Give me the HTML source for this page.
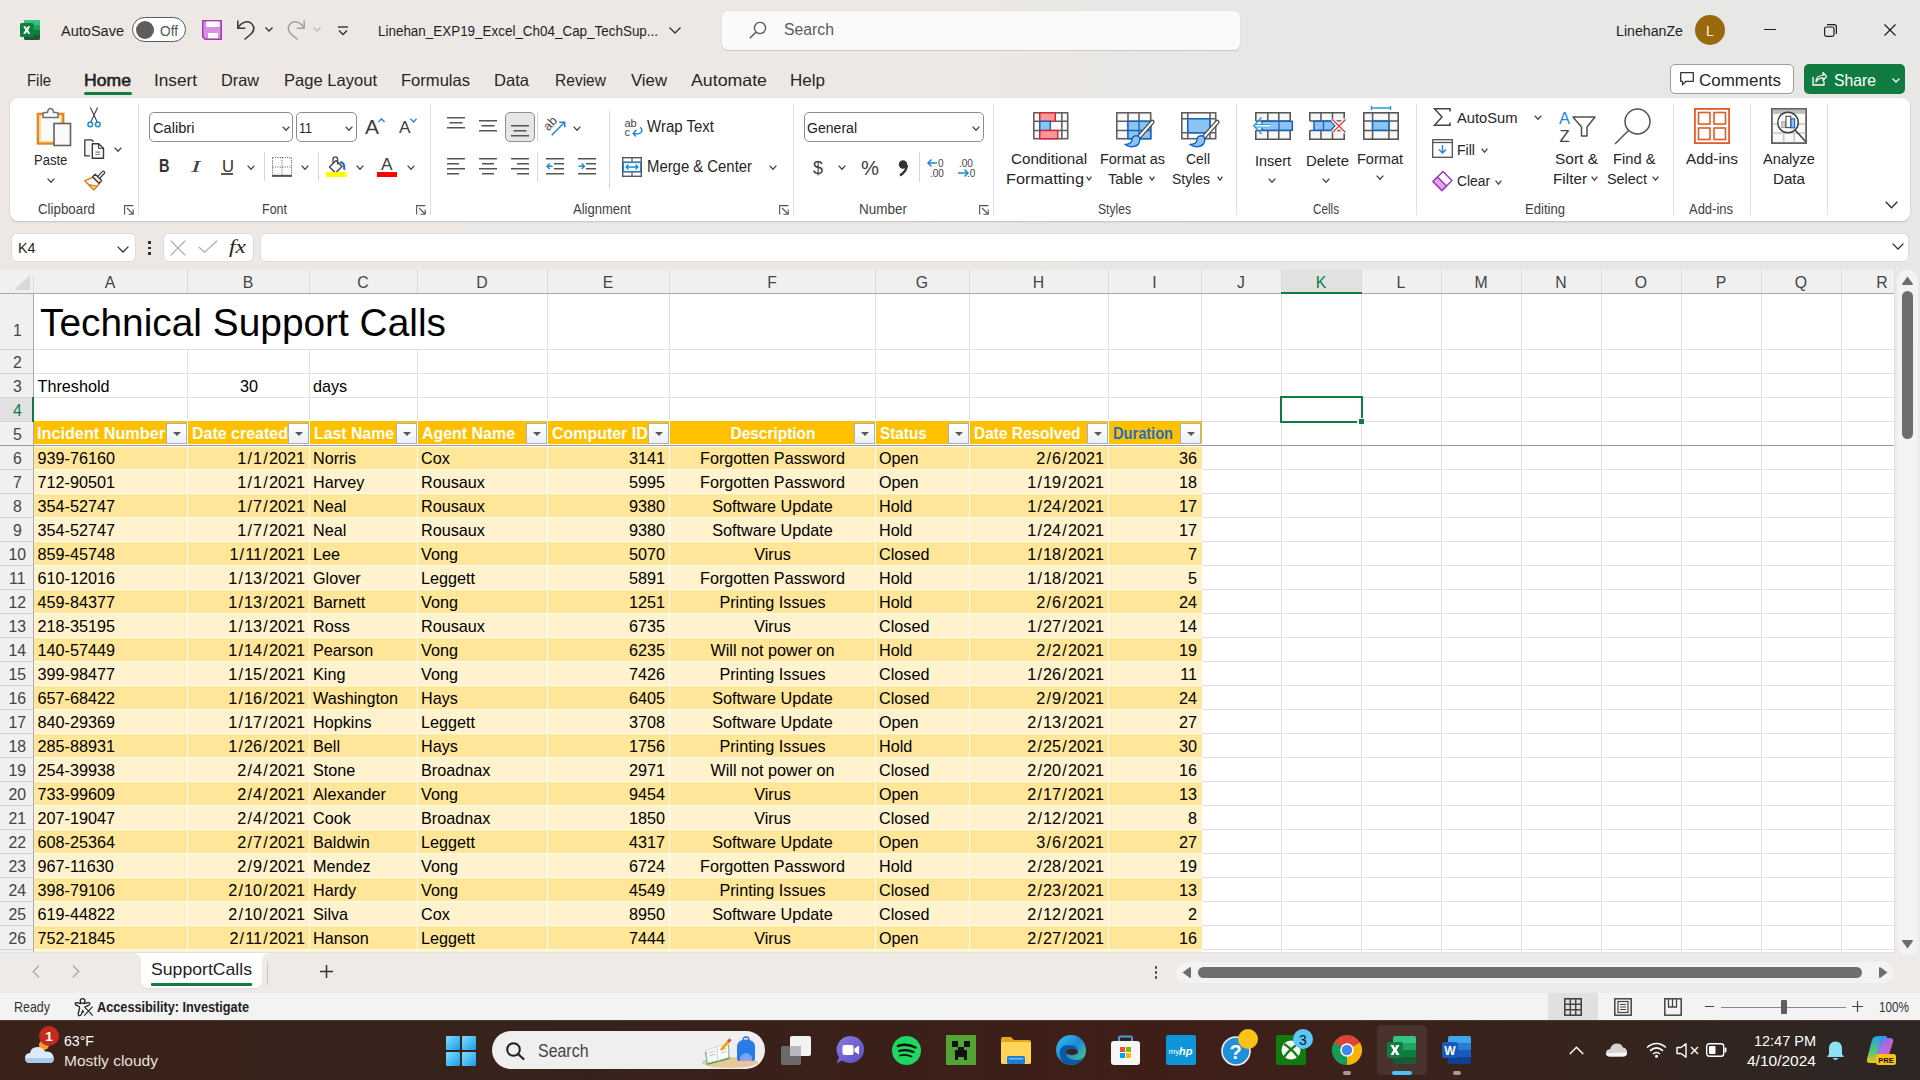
<!DOCTYPE html><html><head><meta charset="utf-8"><style>
html,body{margin:0;padding:0}
body{width:1920px;height:1080px;overflow:hidden;position:relative;font-family:'Liberation Sans', sans-serif;background:#ECE9E6}
.a{position:absolute}
.t{position:absolute;white-space:pre;line-height:1}

</style></head><body>
<div class="a" style="left:0px;top:0px;width:1920px;height:270px;background:linear-gradient(90deg,#EDE8E4 0%,#ECE8E5 45%,#E8E7E5 65%,#E7E7E6 100%)"></div>
<svg class="a" style="left:20px;top:20px;overflow:visible" width="20" height="20" viewBox="0 0 20 20"><rect x="4" y="0" width="16" height="20" rx="1.5" fill="#185C37"/>
<path d="M5.5 0 H18.5 Q20 0 20 1.5 V5 H4 V1.5 Q4 0 5.5 0 Z" fill="#33C481"/>
<rect x="4" y="5" width="16" height="5" fill="#21A366"/><rect x="4" y="10" width="16" height="5" fill="#107C41"/>
<rect x="0" y="3" width="13.5" height="14" rx="1.5" fill="#107C41"/>
<path d="M3.2 6.3 L5.6 6.3 L6.75 8.6 L7.9 6.3 L10.3 6.3 L8.1 10 L10.3 13.7 L7.9 13.7 L6.75 11.4 L5.6 13.7 L3.2 13.7 L5.4 10 Z" fill="#fff"/></svg>
<div class="t" style="left:61px;transform-origin:0 0;top:22.88px;font-size:15.5px;color:#1F1F1F;font-weight:normal;transform:scaleX(0.9373);">AutoSave</div>
<div class="a" style="left:132px;top:17px;width:54px;height:25px;box-sizing:border-box;border:1px solid #5C5C5C;border-radius:13px;background:#FFFFFF"></div>
<div class="a" style="left:136px;top:20.5px;width:18px;height:18px;border-radius:50%;background:#5E5E5E"></div>
<div class="t" style="left:160px;transform-origin:0 0;top:22.80px;font-size:15px;color:#555555;font-weight:normal;transform:scaleX(0.9122);">Off</div>
<svg class="a" style="left:202px;top:20px;overflow:visible" width="20" height="20" viewBox="0 0 20 20"><path d="M0.75 0.75 H19.25 V19.25 H3 L0.75 17 Z" fill="#D68FE2" stroke="#A33CB8" stroke-width="1.5"/>
<rect x="4.3" y="1.5" width="13.2" height="5.5" fill="#FFFFFF"/><rect x="6" y="13" width="10" height="5.2" fill="#FFFFFF"/></svg>
<svg class="a" style="left:237px;top:20px;overflow:visible" width="20" height="20" viewBox="0 0 20 20"><path d="M0.8 0.5 V8.3 H8.3" stroke="#3A3A3A" stroke-width="1.5" fill="none"/><path d="M1 8 C4 2 11 0 14.5 3.5 C18 7 17 11 14 14 L7.5 19.5" stroke="#3A3A3A" stroke-width="1.5" fill="none"/></svg>
<svg class="a" style="left:265px;top:27px;overflow:visible" width="8" height="5" viewBox="0 0 8 5"><path d="M0.5 0.5 L4 4 L7.5 0.5" stroke="#333" stroke-width="1.3" fill="none"/></svg>
<svg class="a" style="left:286px;top:20px;overflow:visible" width="19" height="20" viewBox="0 0 19 20"><path d="M18.2 0.5 V8.3 H10.7" stroke="#A0A0A0" stroke-width="1.5" fill="none"/><path d="M18 8 C15 2 8 0 4.5 3.5 C1 7 2 11 5 14 L11.5 19.5" stroke="#A0A0A0" stroke-width="1.5" fill="none"/></svg>
<svg class="a" style="left:313px;top:27px;overflow:visible" width="8" height="5" viewBox="0 0 8 5"><path d="M0.5 0.5 L4 4 L7.5 0.5" stroke="#BDBDBD" stroke-width="1.3" fill="none"/></svg>
<svg class="a" style="left:338px;top:26px;overflow:visible" width="10" height="10" viewBox="0 0 10 10"><path d="M0 1 H10" stroke="#333" stroke-width="1.4"/><path d="M1 4.5 L5 8.5 L9 4.5" stroke="#333" stroke-width="1.4" fill="none"/></svg>
<div class="t" style="left:378px;transform-origin:0 0;top:22.88px;font-size:15.5px;color:#1F1F1F;font-weight:normal;transform:scaleX(0.8665);">Linehan_EXP19_Excel_Ch04_Cap_TechSup...</div>
<svg class="a" style="left:669px;top:27px;overflow:visible" width="12" height="7" viewBox="0 0 12 7"><path d="M0.5 0.5 L6 6 L11.5 0.5" stroke="#333" stroke-width="1.3" fill="none"/></svg>
<div class="a" style="left:722px;top:11px;width:518px;height:39px;box-sizing:border-box;background:#FAFAFA;border-radius:6px;box-shadow:0 1px 0 #C9C9C9, 0 0 0 1px #E2E2E2"></div>
<svg class="a" style="left:749px;top:21px;overflow:visible" width="18" height="18" viewBox="0 0 18 18"><circle cx="11" cy="7" r="5.6" stroke="#555" stroke-width="1.3" fill="none"/><path d="M7 11 L0.8 17.2" stroke="#555" stroke-width="1.4"/></svg>
<div class="t" style="left:784px;transform-origin:0 0;top:21.76px;font-size:16px;color:#5C5C5C;font-weight:normal;transform:scaleX(0.9862);">Search</div>
<div class="t" style="left:1616px;transform-origin:0 0;top:22.88px;font-size:15.5px;color:#1F1F1F;font-weight:normal;transform:scaleX(0.9146);">LinehanZe</div>
<div class="a" style="left:1695px;top:15px;width:30px;height:30px;border-radius:50%;background:#98690E"></div>
<div class="t" style="left:1310.0px;width:800px;text-align:center;top:24.15px;font-size:14px;color:#FFF3D6;font-weight:normal;">L</div>
<div class="a" style="left:1764px;top:29px;width:12px;height:1.3px;background:#1F1F1F"></div>
<svg class="a" style="left:1824px;top:24px;overflow:visible" width="13" height="13" viewBox="0 0 13 13"><rect x="0.6" y="3" width="9.4" height="9.4" rx="1.8" stroke="#1F1F1F" stroke-width="1.2" fill="none"/><path d="M3 0.6 H10 Q12.4 0.6 12.4 3 V10" stroke="#1F1F1F" stroke-width="1.2" fill="none"/></svg>
<svg class="a" style="left:1884px;top:24px;overflow:visible" width="12" height="12" viewBox="0 0 12 12"><path d="M0.5 0.5 L11.5 11.5 M11.5 0.5 L0.5 11.5" stroke="#1F1F1F" stroke-width="1.2"/></svg>
<div class="t" style="left:27px;transform-origin:0 0;top:71.83px;font-size:16.5px;color:#262626;font-weight:normal;transform:scaleX(0.9027);">File</div>
<div class="t" style="left:84px;transform-origin:0 0;top:71.83px;font-size:16.5px;color:#1F1F1F;font-weight:normal;transform:scaleX(1.0678);-webkit-text-stroke:0.55px #1F1F1F;">Home</div>
<div class="t" style="left:154px;transform-origin:0 0;top:71.83px;font-size:16.5px;color:#262626;font-weight:normal;transform:scaleX(1.0420);">Insert</div>
<div class="t" style="left:221px;transform-origin:0 0;top:71.83px;font-size:16.5px;color:#262626;font-weight:normal;transform:scaleX(0.9869);">Draw</div>
<div class="t" style="left:284px;transform-origin:0 0;top:71.83px;font-size:16.5px;color:#262626;font-weight:normal;transform:scaleX(1.0037);">Page Layout</div>
<div class="t" style="left:401px;transform-origin:0 0;top:71.83px;font-size:16.5px;color:#262626;font-weight:normal;transform:scaleX(1.0034);">Formulas</div>
<div class="t" style="left:494px;transform-origin:0 0;top:71.83px;font-size:16.5px;color:#262626;font-weight:normal;transform:scaleX(1.0042);">Data</div>
<div class="t" style="left:555px;transform-origin:0 0;top:71.83px;font-size:16.5px;color:#262626;font-weight:normal;transform:scaleX(0.9427);">Review</div>
<div class="t" style="left:631px;transform-origin:0 0;top:71.83px;font-size:16.5px;color:#262626;font-weight:normal;transform:scaleX(1.0150);">View</div>
<div class="t" style="left:691px;transform-origin:0 0;top:71.83px;font-size:16.5px;color:#262626;font-weight:normal;transform:scaleX(1.0761);">Automate</div>
<div class="t" style="left:790px;transform-origin:0 0;top:71.83px;font-size:16.5px;color:#262626;font-weight:normal;transform:scaleX(1.0314);">Help</div>
<div class="a" style="left:84px;top:92px;width:48px;height:3px;background:#107C41;border-radius:2px"></div>
<div class="a" style="left:1669.5px;top:64px;width:124px;height:30px;box-sizing:border-box;background:#FFFFFF;border:1px solid #9C9C9C;border-radius:5px"></div>
<svg class="a" style="left:1680px;top:72px;overflow:visible" width="14" height="14" viewBox="0 0 14 14"><path d="M0.7 0.7 H13.3 V9.3 H6 L2.5 12.8 V9.3 H0.7 Z" stroke="#333" stroke-width="1.3" fill="none" stroke-linejoin="round"/></svg>
<div class="t" style="left:1699px;transform-origin:0 0;top:71.53px;font-size:16.5px;color:#262626;font-weight:normal;transform:scaleX(1.0280);">Comments</div>
<div class="a" style="left:1804px;top:64px;width:100.5px;height:30px;background:#107C41;border-radius:5px"></div>
<svg class="a" style="left:1812px;top:71px;overflow:visible" width="15" height="15" viewBox="0 0 15 15"><path d="M1 6 V14 H12 V10" stroke="#fff" stroke-width="1.3" fill="none"/><path d="M4 11 C4 6 7 4.5 11 4.5 V1.5 L14.5 5.5 L11 9.5 V6.8 C8 6.8 5.5 7.8 4 11 Z" stroke="#fff" stroke-width="1.2" fill="none" stroke-linejoin="round"/></svg>
<div class="t" style="left:1834px;transform-origin:0 0;top:71.53px;font-size:16.5px;color:#FFFFFF;font-weight:normal;transform:scaleX(0.9539);">Share</div>
<svg class="a" style="left:1892px;top:77.5px;overflow:visible" width="8" height="5" viewBox="0 0 8 5"><path d="M0.5 0.5 L4 4 L7.5 0.5" stroke="#fff" stroke-width="1.3" fill="none"/></svg>
<div class="a" style="left:10px;top:98px;width:1900px;height:123px;background:#FFFFFF;border-radius:8px;box-shadow:0 1px 2px rgba(0,0,0,0.16),0 0 1px rgba(0,0,0,0.10)"></div>
<div class="a" style="left:138px;top:104px;width:1px;height:111px;background:#E0E0E0"></div>
<div class="a" style="left:430px;top:104px;width:1px;height:111px;background:#E0E0E0"></div>
<div class="a" style="left:793px;top:104px;width:1px;height:111px;background:#E0E0E0"></div>
<div class="a" style="left:993px;top:104px;width:1px;height:111px;background:#E0E0E0"></div>
<div class="a" style="left:1236px;top:104px;width:1px;height:111px;background:#E0E0E0"></div>
<div class="a" style="left:1416px;top:104px;width:1px;height:111px;background:#E0E0E0"></div>
<div class="a" style="left:1673px;top:104px;width:1px;height:111px;background:#E0E0E0"></div>
<div class="a" style="left:1750px;top:104px;width:1px;height:111px;background:#E0E0E0"></div>
<div class="a" style="left:1827px;top:104px;width:1px;height:111px;background:#E0E0E0"></div>
<div class="t" style="left:37.5px;transform-origin:0 0;top:202.15px;font-size:14px;color:#424242;font-weight:normal;transform:scaleX(0.9512);">Clipboard</div>
<div class="t" style="left:262px;transform-origin:0 0;top:202.15px;font-size:14px;color:#424242;font-weight:normal;transform:scaleX(0.8924);">Font</div>
<div class="t" style="left:573px;transform-origin:0 0;top:202.15px;font-size:14px;color:#424242;font-weight:normal;transform:scaleX(0.9316);">Alignment</div>
<div class="t" style="left:859px;transform-origin:0 0;top:202.15px;font-size:14px;color:#424242;font-weight:normal;transform:scaleX(0.9640);">Number</div>
<div class="t" style="left:1098px;transform-origin:0 0;top:202.15px;font-size:14px;color:#424242;font-weight:normal;transform:scaleX(0.8656);">Styles</div>
<div class="t" style="left:1313px;transform-origin:0 0;top:202.15px;font-size:14px;color:#424242;font-weight:normal;transform:scaleX(0.8356);">Cells</div>
<div class="t" style="left:1525px;transform-origin:0 0;top:202.15px;font-size:14px;color:#424242;font-weight:normal;transform:scaleX(0.9344);">Editing</div>
<div class="t" style="left:1689px;transform-origin:0 0;top:202.15px;font-size:14px;color:#424242;font-weight:normal;transform:scaleX(0.9269);">Add-ins</div>
<svg class="a" style="left:124px;top:205px;overflow:visible" width="10" height="10" viewBox="0 0 10 10"><path d="M0.6 9.4 V0.6 H9.4" stroke="#555" stroke-width="1.1" fill="none"/><path d="M3 3 L9 9 M4.5 9.2 H9.2 V4.5" stroke="#555" stroke-width="1.1" fill="none"/></svg>
<svg class="a" style="left:416px;top:205px;overflow:visible" width="10" height="10" viewBox="0 0 10 10"><path d="M0.6 9.4 V0.6 H9.4" stroke="#555" stroke-width="1.1" fill="none"/><path d="M3 3 L9 9 M4.5 9.2 H9.2 V4.5" stroke="#555" stroke-width="1.1" fill="none"/></svg>
<svg class="a" style="left:779px;top:205px;overflow:visible" width="10" height="10" viewBox="0 0 10 10"><path d="M0.6 9.4 V0.6 H9.4" stroke="#555" stroke-width="1.1" fill="none"/><path d="M3 3 L9 9 M4.5 9.2 H9.2 V4.5" stroke="#555" stroke-width="1.1" fill="none"/></svg>
<svg class="a" style="left:979px;top:205px;overflow:visible" width="10" height="10" viewBox="0 0 10 10"><path d="M0.6 9.4 V0.6 H9.4" stroke="#555" stroke-width="1.1" fill="none"/><path d="M3 3 L9 9 M4.5 9.2 H9.2 V4.5" stroke="#555" stroke-width="1.1" fill="none"/></svg>
<svg class="a" style="left:36px;top:107px;overflow:visible" width="36" height="40" viewBox="0 0 36 40"><rect x="1.8" y="6.8" width="25.5" height="29.8" fill="#F7D98B" stroke="#E8811C" stroke-width="2.2"/>
<rect x="4.8" y="9.5" width="19.5" height="24.3" fill="#FAFAFA"/>
<path d="M7 10.5 V7 Q7 5.5 8.5 5.5 H11.5 Q12 1.5 14.5 1.5 Q17 1.5 17.5 5.5 H20.5 Q22 5.5 22 7 V10.5 Z" fill="#FAFAFA" stroke="#6E6E6E" stroke-width="1.5"/>
<rect x="18" y="16.5" width="16.5" height="22" fill="#FAFAFA" stroke="#616161" stroke-width="1.6"/></svg>
<div class="t" style="left:34.4px;transform-origin:0 0;top:152.48px;font-size:15.5px;color:#262626;font-weight:normal;transform:scaleX(0.8401);">Paste</div>
<svg class="a" style="left:47px;top:178px;overflow:visible" width="8" height="5" viewBox="0 0 8 5"><path d="M0.6 0.6 L4.0 4.2 L7.4 0.6" stroke="#444" stroke-width="1.3" fill="none"/></svg>
<svg class="a" style="left:86px;top:107px;overflow:visible" width="15" height="21" viewBox="0 0 15 21"><path d="M4.4 0.5 L11.3 15.3 M11.6 0.5 L4.7 15.3" stroke="#3D3D3D" stroke-width="1.1"/>
<circle cx="4.3" cy="17.4" r="2.3" fill="#fff" stroke="#1E88D8" stroke-width="1.5"/><circle cx="11.8" cy="17.4" r="2.3" fill="#fff" stroke="#1E88D8" stroke-width="1.5"/></svg>
<svg class="a" style="left:84px;top:139px;overflow:visible" width="21" height="21" viewBox="0 0 21 21"><path d="M6 16.9 H0.8 V0.8 H7.5 L9.5 2.8" stroke="#3A3A3A" stroke-width="1.3" fill="#F9F9F9" stroke-linejoin="round"/>
<path d="M8.3 4.8 H14.6 L19.5 9.3 V19.3 H8.3 Z" fill="#F9F9F9" stroke="#3A3A3A" stroke-width="1.4" stroke-linejoin="round"/>
<path d="M14.6 4.8 V9.3 H19.5" stroke="#3A3A3A" stroke-width="1.1" fill="none"/>
<path d="M11.5 13.1 H16 M11.5 15.5 H16" stroke="#7A7A7A" stroke-width="1.1"/></svg>
<svg class="a" style="left:114px;top:147px;overflow:visible" width="8" height="5" viewBox="0 0 8 5"><path d="M0.6 0.6 L4.0 4.2 L7.4 0.6" stroke="#444" stroke-width="1.3" fill="none"/></svg>
<svg class="a" style="left:84px;top:170px;overflow:visible" width="21" height="21" viewBox="0 0 21 21"><path d="M0.7 10.8 L9 7.2 L15.6 13.6 L9.8 19.8 Z" fill="#F9F9F9" stroke="#E07A10" stroke-width="1.4" stroke-linejoin="round"/>
<path d="M4.6 14.6 L13.3 16.2 L9.8 19.8 Z" fill="#F7D98B" stroke="#E07A10" stroke-width="1.1" stroke-linejoin="round"/>
<path d="M19.3 2.6 L13.8 8.3" stroke="#3A3A3A" stroke-width="3.9" stroke-linecap="round"/>
<path d="M19.3 2.6 L13.8 8.3" stroke="#FFFFFF" stroke-width="1.5" stroke-linecap="round"/>
<path d="M8.6 6.8 L11.2 4.3 L17.6 10.6 L15.1 13.2 Z" fill="#F9F9F9" stroke="#3A3A3A" stroke-width="1.4" stroke-linejoin="round"/></svg>
<div class="a" style="left:149px;top:112px;width:143.5px;height:29.5px;box-sizing:border-box;border:1px solid #8C8C8C;border-radius:5px"></div>
<div class="t" style="left:152.5px;transform-origin:0 0;top:119.88px;font-size:15.5px;color:#222;font-weight:normal;transform:scaleX(0.9447);">Calibri</div>
<svg class="a" style="left:282px;top:125.5px;overflow:visible" width="8" height="5" viewBox="0 0 8 5"><path d="M0.6 0.6 L4.0 4.2 L7.4 0.6" stroke="#444" stroke-width="1.3" fill="none"/></svg>
<div class="a" style="left:295.5px;top:112px;width:61px;height:29.5px;box-sizing:border-box;border:1px solid #8C8C8C;border-radius:5px"></div>
<div class="t" style="left:299px;transform-origin:0 0;top:119.88px;font-size:15.5px;color:#222;font-weight:normal;transform:scaleX(0.8079);">11</div>
<svg class="a" style="left:345px;top:125.5px;overflow:visible" width="8" height="5" viewBox="0 0 8 5"><path d="M0.6 0.6 L4.0 4.2 L7.4 0.6" stroke="#444" stroke-width="1.3" fill="none"/></svg>
<div class="t" style="left:365px;transform-origin:0 0;top:115.52px;font-size:21px;color:#3D3D3D;font-weight:normal;transform:scaleX(0.9995);">A</div>
<svg class="a" style="left:378px;top:118px;overflow:visible" width="7" height="5" viewBox="0 0 7 5"><path d="M0.5 4 L3.5 0.8 L6.5 4" stroke="#1E88D8" stroke-width="1.3" fill="none"/></svg>
<div class="t" style="left:399px;transform-origin:0 0;top:119.33px;font-size:16.5px;color:#3D3D3D;font-weight:normal;transform:scaleX(1.0449);">A</div>
<svg class="a" style="left:410px;top:118px;overflow:visible" width="7" height="5" viewBox="0 0 7 5"><path d="M0.5 0.8 L3.5 4 L6.5 0.8" stroke="#1E88D8" stroke-width="1.3" fill="none"/></svg>
<div class="t" style="left:159px;transform-origin:0 0;top:157.69px;font-size:17.5px;color:#333;font-weight:bold;transform:scaleX(0.8308);">B</div>
<div class="t" style="left:191px;transform-origin:0 0;top:157.69px;font-size:17.5px;color:#444;font-weight:normal;transform:scaleX(1.6446);font-style:italic;font-family:'Liberation Serif'">I</div>
<div class="t" style="left:221.5px;transform-origin:0 0;top:157.53px;font-size:16.5px;color:#333;font-weight:normal;transform:scaleX(1.0070);">U</div>
<div class="a" style="left:221px;top:173px;width:12px;height:1.5px;background:#555"></div>
<svg class="a" style="left:247px;top:165px;overflow:visible" width="8" height="5" viewBox="0 0 8 5"><path d="M0.6 0.6 L4.0 4.2 L7.4 0.6" stroke="#444" stroke-width="1.3" fill="none"/></svg>
<div class="a" style="left:264px;top:152px;width:1px;height:29px;background:#D6D6D6"></div>
<svg class="a" style="left:272px;top:157px;overflow:visible" width="20" height="20" viewBox="0 0 20 20"><path d="M0.5 0.5 H19.5 V19.5 H0.5 Z M10 0.5 V19.5 M0.5 10 H19.5" stroke="#6A6A6A" stroke-width="1" stroke-dasharray="1.2 1.2" fill="none"/>
<path d="M0 18.8 H20" stroke="#555" stroke-width="2"/></svg>
<svg class="a" style="left:301px;top:165px;overflow:visible" width="8" height="5" viewBox="0 0 8 5"><path d="M0.6 0.6 L4.0 4.2 L7.4 0.6" stroke="#444" stroke-width="1.3" fill="none"/></svg>
<div class="a" style="left:318px;top:152px;width:1px;height:29px;background:#D6D6D6"></div>
<svg class="a" style="left:326px;top:156px;overflow:visible" width="21" height="21" viewBox="0 0 21 21"><path d="M3.5 11 L10 4.5 L16 10.5 L9.5 17 Z" fill="#FAFAFA" stroke="#444" stroke-width="1.4" stroke-linejoin="round"/>
<path d="M7 7.5 V3 Q7 0.8 9.3 0.8 Q11.6 0.8 11.6 3 V8.5" stroke="#444" stroke-width="1.3" fill="none"/>
<path d="M14.5 6.5 Q18.3 6 18.3 13" stroke="#1E6FC8" stroke-width="2.2" fill="none" stroke-linecap="round"/>
<rect x="0" y="16" width="20.5" height="5" fill="#FFFF00"/></svg>
<svg class="a" style="left:356px;top:165px;overflow:visible" width="8" height="5" viewBox="0 0 8 5"><path d="M0.6 0.6 L4.0 4.2 L7.4 0.6" stroke="#444" stroke-width="1.3" fill="none"/></svg>
<div class="t" style="left:381px;transform-origin:0 0;top:156.11px;font-size:17px;color:#3D3D3D;font-weight:normal;transform:scaleX(1.0142);">A</div>
<div class="a" style="left:376.7px;top:171.8px;width:20.4px;height:5px;background:#FF0000"></div>
<svg class="a" style="left:407px;top:165px;overflow:visible" width="8" height="5" viewBox="0 0 8 5"><path d="M0.6 0.6 L4.0 4.2 L7.4 0.6" stroke="#444" stroke-width="1.3" fill="none"/></svg>
<svg class="a" style="left:447px;top:116px;overflow:visible" width="20" height="20" viewBox="0 0 20 20"><rect x="0" y="1" width="18" height="1.5" fill="#555"/><rect x="2.5" y="6" width="13" height="1.5" fill="#555"/><rect x="0" y="11" width="18" height="1.5" fill="#555"/></svg>
<svg class="a" style="left:479px;top:119px;overflow:visible" width="20" height="20" viewBox="0 0 20 20"><rect x="0" y="1" width="18" height="1.5" fill="#555"/><rect x="2.5" y="6" width="13" height="1.5" fill="#555"/><rect x="0" y="11" width="18" height="1.5" fill="#555"/></svg>
<div class="a" style="left:505px;top:112px;width:30px;height:29.5px;box-sizing:border-box;background:#E6E6E6;border:1px solid #8F8F8F;border-radius:5px"></div>
<svg class="a" style="left:511px;top:124px;overflow:visible" width="20" height="20" viewBox="0 0 20 20"><rect x="0" y="1" width="18" height="1.5" fill="#555"/><rect x="2.5" y="6" width="13" height="1.5" fill="#555"/><rect x="0" y="11" width="18" height="1.5" fill="#555"/></svg>
<div class="a" style="left:537px;top:112px;width:1px;height:30px;background:#D6D6D6"></div>
<svg class="a" style="left:545px;top:116px;overflow:visible" width="21" height="21" viewBox="0 0 21 21"><text x="0" y="0" font-size="12.5" fill="#444" font-family="Liberation Sans" transform="translate(3.5 15.5) rotate(-48)">ab</text>
<path d="M6.7 19.2 L19.6 6.2" stroke="#1E88D8" stroke-width="1.5"/><path d="M14.3 6.2 H19.8 V11.2" stroke="#1E88D8" stroke-width="1.5" fill="none"/></svg>
<svg class="a" style="left:573px;top:125.5px;overflow:visible" width="8" height="5" viewBox="0 0 8 5"><path d="M0.6 0.6 L4.0 4.2 L7.4 0.6" stroke="#444" stroke-width="1.3" fill="none"/></svg>
<div class="a" style="left:609px;top:111px;width:1px;height:78px;background:#D6D6D6"></div>
<svg class="a" style="left:624px;top:117px;overflow:visible" width="20" height="21" viewBox="0 0 20 21"><text x="0.5" y="9.5" font-size="11" fill="#444" font-family="Liberation Sans">ab</text><text x="0.5" y="18.8" font-size="11" fill="#444" font-family="Liberation Sans">c</text>
<path d="M16.2 10.3 Q19.5 13.5 16.5 16 Q14 17.5 9.5 16.3" stroke="#1E88D8" stroke-width="1.4" fill="none"/><path d="M12.5 12.8 L9.2 16.2 L11.8 19.5" stroke="#1E88D8" stroke-width="1.4" fill="none"/></svg>
<div class="t" style="left:647px;transform-origin:0 0;top:119.46px;font-size:16px;color:#262626;font-weight:normal;transform:scaleX(0.9379);">Wrap Text</div>
<svg class="a" style="left:447px;top:157px;overflow:visible" width="20" height="20" viewBox="0 0 20 20"><rect x="0" y="1" width="18" height="1.5" fill="#555"/><rect x="0" y="6" width="12" height="1.5" fill="#555"/><rect x="0" y="11" width="18" height="1.5" fill="#555"/><rect x="0" y="16" width="12" height="1.5" fill="#555"/></svg>
<svg class="a" style="left:479px;top:157px;overflow:visible" width="20" height="20" viewBox="0 0 20 20"><rect x="0" y="1" width="18" height="1.5" fill="#555"/><rect x="3" y="6" width="12" height="1.5" fill="#555"/><rect x="0" y="11" width="18" height="1.5" fill="#555"/><rect x="3" y="16" width="12" height="1.5" fill="#555"/></svg>
<svg class="a" style="left:511px;top:157px;overflow:visible" width="20" height="20" viewBox="0 0 20 20"><rect x="0" y="1" width="18" height="1.5" fill="#555"/><rect x="6" y="6" width="12" height="1.5" fill="#555"/><rect x="0" y="11" width="18" height="1.5" fill="#555"/><rect x="6" y="16" width="12" height="1.5" fill="#555"/></svg>
<div class="a" style="left:537px;top:152px;width:1px;height:30px;background:#D6D6D6"></div>
<svg class="a" style="left:546px;top:157px;overflow:visible" width="19" height="19" viewBox="0 0 19 19"><rect x="0" y="1" width="18" height="1.5" fill="#555"/><rect x="8" y="6" width="10" height="1.5" fill="#555"/><rect x="8" y="11" width="10" height="1.5" fill="#555"/><rect x="0" y="16" width="18" height="1.5" fill="#555"/><path d="M1 9.3 H6.5 M3.8 6.5 L1 9.3 L3.8 12" stroke="#1E88D8" stroke-width="1.4" fill="none"/></svg>
<svg class="a" style="left:578px;top:157px;overflow:visible" width="19" height="19" viewBox="0 0 19 19"><rect x="0" y="1" width="18" height="1.5" fill="#555"/><rect x="8" y="6" width="10" height="1.5" fill="#555"/><rect x="8" y="11" width="10" height="1.5" fill="#555"/><rect x="0" y="16" width="18" height="1.5" fill="#555"/><path d="M0.5 9.3 H6.5 M3.7 6.5 L6.5 9.3 L3.7 12" stroke="#1E88D8" stroke-width="1.4" fill="none"/></svg>
<svg class="a" style="left:622px;top:157px;overflow:visible" width="20" height="20" viewBox="0 0 20 20"><rect x="0.7" y="0.7" width="18.6" height="18.6" fill="#fff" stroke="#555" stroke-width="1.4"/>
<path d="M0.7 5 H19.3 M0.7 15 H19.3 M10 0.7 V5 M10 15 V19.3" stroke="#555" stroke-width="1.2"/>
<rect x="1.5" y="5.5" width="17" height="9" fill="#fff" stroke="#1E88D8" stroke-width="1.2"/>
<path d="M4 10 H16 M6.5 7.5 L4 10 L6.5 12.5 M13.5 7.5 L16 10 L13.5 12.5" stroke="#1E88D8" stroke-width="1.3" fill="none"/></svg>
<div class="t" style="left:647px;transform-origin:0 0;top:159.46px;font-size:16px;color:#262626;font-weight:normal;transform:scaleX(0.9297);">Merge &amp; Center</div>
<svg class="a" style="left:769px;top:165px;overflow:visible" width="8" height="5" viewBox="0 0 8 5"><path d="M0.6 0.6 L4.0 4.2 L7.4 0.6" stroke="#444" stroke-width="1.3" fill="none"/></svg>
<div class="a" style="left:804px;top:112px;width:180px;height:29.5px;box-sizing:border-box;border:1px solid #8C8C8C;border-radius:5px"></div>
<div class="t" style="left:807px;transform-origin:0 0;top:119.88px;font-size:15.5px;color:#222;font-weight:normal;transform:scaleX(0.9067);">General</div>
<svg class="a" style="left:972px;top:125.5px;overflow:visible" width="8" height="5" viewBox="0 0 8 5"><path d="M0.6 0.6 L4.0 4.2 L7.4 0.6" stroke="#444" stroke-width="1.3" fill="none"/></svg>
<div class="t" style="left:813px;transform-origin:0 0;top:158.42px;font-size:19px;color:#3D3D3D;font-weight:normal;transform:scaleX(0.9462);">$</div>
<svg class="a" style="left:838px;top:165px;overflow:visible" width="8" height="5" viewBox="0 0 8 5"><path d="M0.6 0.6 L4.0 4.2 L7.4 0.6" stroke="#444" stroke-width="1.3" fill="none"/></svg>
<div class="t" style="left:861px;transform-origin:0 0;top:158.07px;font-size:20px;color:#3D3D3D;font-weight:normal;transform:scaleX(1.0121);">%</div>
<svg class="a" style="left:898px;top:160px;overflow:visible" width="10" height="16" viewBox="0 0 10 16"><circle cx="5" cy="4.5" r="4.2" fill="#333"/><path d="M8.8 5 Q9 11 2 15.5" stroke="#333" stroke-width="2.4" fill="none"/></svg>
<div class="a" style="left:919px;top:152px;width:1px;height:30px;background:#D6D6D6"></div>
<svg class="a" style="left:927px;top:157px;overflow:visible" width="20" height="20" viewBox="0 0 20 20"><path d="M1 6 H10 M4.5 2.5 L1 6 L4.5 9.5" stroke="#1E88D8" stroke-width="1.5" fill="none"/>
<text x="11" y="9.5" font-size="10" fill="#444" font-family="Liberation Sans">0</text>
<text x="3" y="19.5" font-size="10" fill="#444" font-family="Liberation Sans">.00</text></svg>
<svg class="a" style="left:958px;top:157px;overflow:visible" width="20" height="20" viewBox="0 0 20 20"><text x="1" y="9.5" font-size="10" fill="#444" font-family="Liberation Sans">.00</text>
<path d="M0 16 H10 M6.5 12.5 L10 16 L6.5 19.5" stroke="#1E88D8" stroke-width="1.5" fill="none"/>
<text x="9" y="19.5" font-size="10" fill="#444" font-family="Liberation Sans">.0</text></svg>
<svg class="a" style="left:1032.5px;top:112px;overflow:visible" width="35.5" height="27.5" viewBox="0 0 35.5 27.5"><rect x="0.8" y="0.8" width="33.9" height="25.9" fill="#FAFAFA"/><path d="M6.8 0.8 V26.7" stroke="#616161" stroke-width="1.6"/><path d="M28.8 0.8 V26.7" stroke="#616161" stroke-width="1.6"/><path d="M0.8 9.3 H34.7" stroke="#616161" stroke-width="1.6"/><path d="M0.8 18.5 H34.7" stroke="#616161" stroke-width="1.6"/><rect x="0.8" y="0.8" width="33.9" height="25.9" fill="none" stroke="#616161" stroke-width="1.6"/><rect x="6.8" y="0.8" width="15.5" height="8.5" fill="#F8969C" stroke="#D9262E" stroke-width="1.4"/><rect x="6.8" y="9.3" width="10.5" height="9.2" fill="#8CC3EF" stroke="#1565C0" stroke-width="1.4"/><rect x="6.8" y="18.5" width="18" height="8.2" fill="#F8969C" stroke="#D9262E" stroke-width="1.4"/></svg>
<div class="t" style="left:1011px;transform-origin:0 0;top:150.88px;font-size:15.5px;color:#262626;font-weight:normal;transform:scaleX(0.9800);">Conditional</div>
<div class="t" style="left:1006px;transform-origin:0 0;top:170.88px;font-size:15.5px;color:#262626;font-weight:normal;transform:scaleX(1.0529);">Formatting</div>
<svg class="a" style="left:1086px;top:176px;overflow:visible" width="6" height="5" viewBox="0 0 6 5"><path d="M0.6 0.6 L3.0 4.2 L5.4 0.6" stroke="#444" stroke-width="1.3" fill="none"/></svg>
<svg class="a" style="left:1115.5px;top:112px;overflow:visible" width="35.5" height="27.5" viewBox="0 0 35.5 27.5"><rect x="0.8" y="0.8" width="33.9" height="25.9" fill="#FAFAFA"/><path d="M12 0.8 V26.7" stroke="#616161" stroke-width="1.6"/><path d="M23 0.8 V26.7" stroke="#616161" stroke-width="1.6"/><path d="M0.8 9.3 H34.7" stroke="#616161" stroke-width="1.6"/><path d="M0.8 18.5 H34.7" stroke="#616161" stroke-width="1.6"/><rect x="0.8" y="0.8" width="33.9" height="25.9" fill="none" stroke="#616161" stroke-width="1.6"/><rect x="12" y="9.3" width="22.7" height="17.4" fill="#8CC3EF" stroke="#1565C0" stroke-width="1.5"/><path d="M23 9.3 V26.7 M12 18.5 H34.7" stroke="#1565C0" stroke-width="1.3"/></svg>
<svg class="a" style="left:1124px;top:119px;overflow:visible" width="31" height="28" viewBox="0 0 31 28"><path d="M28.3 3 L15.5 17.5" stroke="#4A4A4A" stroke-width="4.6" stroke-linecap="round"/>
<path d="M28.3 3 L15.5 17.5" stroke="#FFFFFF" stroke-width="2" stroke-linecap="round"/>
<path d="M15.8 20.5 Q15.5 16.5 12 16.8 Q8 17.2 7.8 21.5 Q7.5 25 1 25.5 Q4.5 28.2 9.5 27.6 Q15.8 26.5 15.8 20.5 Z" fill="#8CC3EF" stroke="#1565C0" stroke-width="1.5" stroke-linejoin="round"/></svg>
<div class="t" style="left:1100px;transform-origin:0 0;top:150.88px;font-size:15.5px;color:#262626;font-weight:normal;transform:scaleX(0.9317);">Format as</div>
<div class="t" style="left:1108px;transform-origin:0 0;top:170.88px;font-size:15.5px;color:#262626;font-weight:normal;transform:scaleX(0.9445);">Table</div>
<svg class="a" style="left:1149px;top:176px;overflow:visible" width="6" height="5" viewBox="0 0 6 5"><path d="M0.6 0.6 L3.0 4.2 L5.4 0.6" stroke="#444" stroke-width="1.3" fill="none"/></svg>
<svg class="a" style="left:1180.5px;top:112px;overflow:visible" width="35.5" height="27.5" viewBox="0 0 35.5 27.5"><rect x="0.8" y="0.8" width="33.9" height="25.9" fill="#FAFAFA"/><path d="M6.8 0.8 V26.7" stroke="#616161" stroke-width="1.6"/><path d="M29 0.8 V26.7" stroke="#616161" stroke-width="1.6"/><path d="M0.8 6.8 H34.7" stroke="#616161" stroke-width="1.6"/><path d="M0.8 20.8 H34.7" stroke="#616161" stroke-width="1.6"/><rect x="0.8" y="0.8" width="33.9" height="25.9" fill="none" stroke="#616161" stroke-width="1.6"/><rect x="6.8" y="6.8" width="22" height="14" fill="#8CC3EF" stroke="#1565C0" stroke-width="1.5"/></svg>
<svg class="a" style="left:1188.5px;top:119px;overflow:visible" width="31" height="28" viewBox="0 0 31 28"><path d="M28.3 3 L15.5 17.5" stroke="#4A4A4A" stroke-width="4.6" stroke-linecap="round"/>
<path d="M28.3 3 L15.5 17.5" stroke="#FFFFFF" stroke-width="2" stroke-linecap="round"/>
<path d="M15.8 20.5 Q15.5 16.5 12 16.8 Q8 17.2 7.8 21.5 Q7.5 25 1 25.5 Q4.5 28.2 9.5 27.6 Q15.8 26.5 15.8 20.5 Z" fill="#8CC3EF" stroke="#1565C0" stroke-width="1.5" stroke-linejoin="round"/></svg>
<div class="t" style="left:1186px;transform-origin:0 0;top:150.88px;font-size:15.5px;color:#262626;font-weight:normal;transform:scaleX(0.8988);">Cell</div>
<div class="t" style="left:1172px;transform-origin:0 0;top:170.88px;font-size:15.5px;color:#262626;font-weight:normal;transform:scaleX(0.9002);">Styles</div>
<svg class="a" style="left:1217px;top:176px;overflow:visible" width="6" height="5" viewBox="0 0 6 5"><path d="M0.6 0.6 L3.0 4.2 L5.4 0.6" stroke="#444" stroke-width="1.3" fill="none"/></svg>
<svg class="a" style="left:1252px;top:112px;overflow:visible" width="42" height="28" viewBox="0 0 42 28"><rect x="3.8" y="0.8" width="34.4" height="26.4" fill="#F7F7F7"/>
<path d="M3.8 9 V0.8 H38.2 V27.2 H3.8 V18.5" stroke="#555555" stroke-width="1.6" fill="none"/>
<path d="M15.8 0.8 V27.2 M26.8 0.8 V27.2 M3.8 9 H38.2 M3.8 18.5 H38.2" stroke="#555555" stroke-width="1.5"/>
<rect x="10" y="9.3" width="30.3" height="9" fill="#8CC3EF" stroke="#1565C0" stroke-width="1.5"/>
<path d="M27 9.3 V18.3" stroke="#1565C0" stroke-width="1.3"/>
<path d="M18 13.8 H2" stroke="#fff" stroke-width="4"/><path d="M18 12.5 H3 M18 15.1 H3" stroke="#2B98E0" stroke-width="1" />
<path d="M9.5 5.5 L1.8 13.8 L9.5 22" stroke="#2B98E0" stroke-width="1.5" fill="none"/></svg>
<div class="t" style="left:1255px;transform-origin:0 0;top:152.68px;font-size:15.5px;color:#262626;font-weight:normal;transform:scaleX(0.9286);">Insert</div>
<svg class="a" style="left:1268px;top:178px;overflow:visible" width="8" height="5" viewBox="0 0 8 5"><path d="M0.6 0.6 L4.0 4.2 L7.4 0.6" stroke="#444" stroke-width="1.3" fill="none"/></svg>
<svg class="a" style="left:1309px;top:112px;overflow:visible" width="38" height="28" viewBox="0 0 38 28"><rect x="0.8" y="0.8" width="34.4" height="26.4" fill="#F7F7F7"/>
<path d="M0.8 9 V0.8 H35.2 V9 M35.2 18.5 V27.2 H0.8 V18.5" stroke="#555555" stroke-width="1.6" fill="none"/>
<path d="M12 0.8 V27.2 M23.5 0.8 V27.2 M0.8 9 H35.2 M0.8 18.5 H35.2" stroke="#555555" stroke-width="1.5"/>
<path d="M5 9.3 H22 L26 13.8 L22 18.3 H5 Z" fill="#8CC3EF" stroke="#1565C0" stroke-width="1.5"/>
<path d="M14.5 9.3 V18.3" stroke="#1565C0" stroke-width="1.3"/>
<path d="M23.5 7.5 L36.5 20.5 M36.5 7.5 L23.5 20.5" stroke="#fff" stroke-width="4"/>
<path d="M23.5 7.5 L36.5 20.5 M36.5 7.5 L23.5 20.5" stroke="#E53935" stroke-width="1.4"/></svg>
<div class="t" style="left:1306px;transform-origin:0 0;top:152.68px;font-size:15.5px;color:#262626;font-weight:normal;transform:scaleX(0.9597);">Delete</div>
<svg class="a" style="left:1322px;top:178px;overflow:visible" width="8" height="5" viewBox="0 0 8 5"><path d="M0.6 0.6 L4.0 4.2 L7.4 0.6" stroke="#444" stroke-width="1.3" fill="none"/></svg>
<svg class="a" style="left:1363px;top:106px;overflow:visible" width="36" height="34" viewBox="0 0 36 34"><rect x="0.8" y="6.8" width="34.4" height="26.4" fill="#F7F7F7"/>
<path d="M9.6 6.8 V33.2 M25.9 6.8 V33.2 M0.8 15 H35.2 M0.8 24.5 H35.2" stroke="#555555" stroke-width="1.5"/>
<rect x="0.8" y="6.8" width="34.4" height="26.4" fill="none" stroke="#555555" stroke-width="1.6"/>
<rect x="9.6" y="15.3" width="16.3" height="9" fill="#8CC3EF" stroke="#1565C0" stroke-width="1.5"/>
<path d="M8.5 0 V4 M27.5 0 V4 M8.5 2 H27.5" stroke="#2B98E0" stroke-width="1.5"/></svg>
<div class="t" style="left:1357px;transform-origin:0 0;top:150.88px;font-size:15.5px;color:#262626;font-weight:normal;transform:scaleX(0.9371);">Format</div>
<svg class="a" style="left:1376px;top:175px;overflow:visible" width="8" height="5" viewBox="0 0 8 5"><path d="M0.6 0.6 L4.0 4.2 L7.4 0.6" stroke="#444" stroke-width="1.3" fill="none"/></svg>
<svg class="a" style="left:1433px;top:108px;overflow:visible" width="18" height="18" viewBox="0 0 18 18"><path d="M17 3.5 V0.8 H1.5 L9 9 L1.5 17.2 H17 V14.5" stroke="#444" stroke-width="1.5" fill="none" stroke-linejoin="miter"/></svg>
<div class="t" style="left:1457px;transform-origin:0 0;top:109.88px;font-size:15.5px;color:#262626;font-weight:normal;transform:scaleX(0.9489);">AutoSum</div>
<svg class="a" style="left:1533.5px;top:115px;overflow:visible" width="8" height="5" viewBox="0 0 8 5"><path d="M0.6 0.6 L4.0 4.2 L7.4 0.6" stroke="#444" stroke-width="1.3" fill="none"/></svg>
<svg class="a" style="left:1432px;top:139px;overflow:visible" width="21" height="19" viewBox="0 0 21 19"><rect x="0.7" y="0.7" width="19.6" height="17.6" fill="#fff" stroke="#505050" stroke-width="1.3"/><path d="M0.7 3.5 H20.3" stroke="#505050" stroke-width="1.3"/><path d="M10.5 6 V14 M7 10.5 L10.5 14 L14 10.5" stroke="#1E88D8" stroke-width="1.4" fill="none"/></svg>
<div class="t" style="left:1457px;transform-origin:0 0;top:141.88px;font-size:15.5px;color:#262626;font-weight:normal;transform:scaleX(0.9091);">Fill</div>
<svg class="a" style="left:1481px;top:148px;overflow:visible" width="7" height="5" viewBox="0 0 7 5"><path d="M0.6 0.6 L3.5 4.2 L6.4 0.6" stroke="#444" stroke-width="1.3" fill="none"/></svg>
<svg class="a" style="left:1432px;top:171px;overflow:visible" width="21" height="20" viewBox="0 0 21 20"><path d="M1 12 L11 2 L20 11 L10 21 Z" fill="#fff" stroke="#9D3AB8" stroke-width="1.5" stroke-linejoin="round" transform="translate(0,-1.5)"/><path d="M1 10.5 L5.5 6 L14.5 15 L10 19.5 Z" fill="#DFA4EA" stroke="#9D3AB8" stroke-width="1.5" stroke-linejoin="round"/></svg>
<div class="t" style="left:1457px;transform-origin:0 0;top:173.48px;font-size:15.5px;color:#262626;font-weight:normal;transform:scaleX(0.8909);">Clear</div>
<svg class="a" style="left:1495px;top:180px;overflow:visible" width="7" height="5" viewBox="0 0 7 5"><path d="M0.6 0.6 L3.5 4.2 L6.4 0.6" stroke="#444" stroke-width="1.3" fill="none"/></svg>
<svg class="a" style="left:1556px;top:108px;overflow:visible" width="42" height="36" viewBox="0 0 42 36"><text x="3" y="16.3" font-size="16.5" fill="#1E88D8" font-family="Liberation Sans">A</text>
<text x="3.5" y="34" font-size="16.5" fill="#444" font-family="Liberation Sans">Z</text>
<path d="M17 9 H39 L31 19 V28 L25.5 28 V19 Z" fill="#fff" stroke="#505050" stroke-width="1.5" stroke-linejoin="round"/></svg>
<div class="t" style="left:1555px;transform-origin:0 0;top:151.48px;font-size:15.5px;color:#262626;font-weight:normal;transform:scaleX(0.9983);">Sort &amp;</div>
<div class="t" style="left:1553px;transform-origin:0 0;top:170.88px;font-size:15.5px;color:#262626;font-weight:normal;transform:scaleX(0.9871);">Filter</div>
<svg class="a" style="left:1591px;top:176px;overflow:visible" width="7" height="5" viewBox="0 0 7 5"><path d="M0.6 0.6 L3.5 4.2 L6.4 0.6" stroke="#444" stroke-width="1.3" fill="none"/></svg>
<svg class="a" style="left:1614px;top:108px;overflow:visible" width="38" height="38" viewBox="0 0 38 38"><circle cx="23.5" cy="13.5" r="12.5" fill="#fff" stroke="#505050" stroke-width="1.5"/><path d="M14.5 22.5 L1 36" stroke="#505050" stroke-width="1.5"/></svg>
<div class="t" style="left:1612.5px;transform-origin:0 0;top:151.48px;font-size:15.5px;color:#262626;font-weight:normal;transform:scaleX(0.9487);">Find &amp;</div>
<div class="t" style="left:1607px;transform-origin:0 0;top:170.88px;font-size:15.5px;color:#262626;font-weight:normal;transform:scaleX(0.9285);">Select</div>
<svg class="a" style="left:1651.5px;top:176px;overflow:visible" width="7" height="5" viewBox="0 0 7 5"><path d="M0.6 0.6 L3.5 4.2 L6.4 0.6" stroke="#444" stroke-width="1.3" fill="none"/></svg>
<svg class="a" style="left:1694px;top:108px;overflow:visible" width="36" height="36" viewBox="0 0 36 36"><rect x="0.9" y="0.9" width="34.2" height="34.2" fill="#fff" stroke="#E25A2B" stroke-width="1.8"/><rect x="4.5" y="4.5" width="11.5" height="11.5" fill="#fff" stroke="#E25A2B" stroke-width="1.6"/><rect x="20" y="4.5" width="11.5" height="11.5" fill="#fff" stroke="#E25A2B" stroke-width="1.6"/><rect x="4.5" y="20" width="11.5" height="11.5" fill="#fff" stroke="#E25A2B" stroke-width="1.6"/><rect x="20" y="20" width="11.5" height="11.5" fill="#fff" stroke="#E25A2B" stroke-width="1.6"/></svg>
<div class="t" style="left:1686px;transform-origin:0 0;top:150.88px;font-size:15.5px;color:#262626;font-weight:normal;transform:scaleX(0.9894);">Add-ins</div>
<svg class="a" style="left:1771px;top:108px;overflow:visible" width="36" height="36" viewBox="0 0 36 36"><rect x="0.9" y="0.9" width="34.2" height="34.2" fill="#FAFAFA" stroke="#616161" stroke-width="1.8"/>
<rect x="1.8" y="1.8" width="32.4" height="4" fill="#BDBDBD"/>
<path d="M1.8 16 H34.2 M1.8 25 H34.2 M12.7 25 V34.2 M23.2 25 V34.2" stroke="#C6C6C6" stroke-width="1.6"/>
<circle cx="17" cy="14.5" r="10.3" fill="#FAFAFA" stroke="#3F3F3F" stroke-width="1.5"/>
<path d="M24.2 22 L34.5 33.5" stroke="#3F3F3F" stroke-width="1.5"/>
<rect x="10.8" y="13.8" width="3.6" height="5.8" fill="#D0D0D0" stroke="#9A9A9A" stroke-width="0.9"/>
<rect x="15" y="8.3" width="4.8" height="11.3" fill="#FFFFFF" stroke="#4A4A4A" stroke-width="1.1"/>
<rect x="20" y="10.8" width="3.6" height="9" fill="#8CC3EF" stroke="#1565C0" stroke-width="1.1"/></svg>
<div class="t" style="left:1763px;transform-origin:0 0;top:150.88px;font-size:15.5px;color:#262626;font-weight:normal;transform:scaleX(0.9430);">Analyze</div>
<div class="t" style="left:1773px;transform-origin:0 0;top:170.88px;font-size:15.5px;color:#262626;font-weight:normal;transform:scaleX(0.9774);">Data</div>
<svg class="a" style="left:1885px;top:201px;overflow:visible" width="13" height="8" viewBox="0 0 13 8"><path d="M0.7 0.7 L6.5 6.8 L12.3 0.7" stroke="#333" stroke-width="1.4" fill="none"/></svg>
<div class="a" style="left:0px;top:270px;width:1894px;height:23px;background:#F0F0F0"></div>
<div class="a" style="left:0px;top:293px;width:33px;height:660px;background:#F0F0F0"></div>
<div class="a" style="left:34px;top:294px;width:1860px;height:659px;background:#FFFFFF"></div>
<svg class="a" style="left:14px;top:275px;overflow:visible" width="16" height="15" viewBox="0 0 16 15"><path d="M16 0 L16 15 L0 15 Z" fill="#D9D9D9"/></svg>
<div class="a" style="left:1281px;top:270px;width:80px;height:23px;background:#E1E1E1"></div>
<div class="a" style="left:0px;top:397px;width:33px;height:24px;background:#E1E1E1"></div>
<div class="a" style="left:187px;top:270px;width:1px;height:23px;background:#DADADA"></div>
<div class="a" style="left:187px;top:349px;width:1px;height:604px;background:#E1E1E1"></div>
<div class="a" style="left:309px;top:270px;width:1px;height:23px;background:#DADADA"></div>
<div class="a" style="left:309px;top:349px;width:1px;height:604px;background:#E1E1E1"></div>
<div class="a" style="left:417px;top:270px;width:1px;height:23px;background:#DADADA"></div>
<div class="a" style="left:417px;top:349px;width:1px;height:604px;background:#E1E1E1"></div>
<div class="a" style="left:547px;top:270px;width:1px;height:23px;background:#DADADA"></div>
<div class="a" style="left:547px;top:293px;width:1px;height:660px;background:#E1E1E1"></div>
<div class="a" style="left:669px;top:270px;width:1px;height:23px;background:#DADADA"></div>
<div class="a" style="left:669px;top:293px;width:1px;height:660px;background:#E1E1E1"></div>
<div class="a" style="left:875px;top:270px;width:1px;height:23px;background:#DADADA"></div>
<div class="a" style="left:875px;top:293px;width:1px;height:660px;background:#E1E1E1"></div>
<div class="a" style="left:969px;top:270px;width:1px;height:23px;background:#DADADA"></div>
<div class="a" style="left:969px;top:293px;width:1px;height:660px;background:#E1E1E1"></div>
<div class="a" style="left:1108px;top:270px;width:1px;height:23px;background:#DADADA"></div>
<div class="a" style="left:1108px;top:293px;width:1px;height:660px;background:#E1E1E1"></div>
<div class="a" style="left:1201px;top:270px;width:1px;height:23px;background:#DADADA"></div>
<div class="a" style="left:1201px;top:293px;width:1px;height:660px;background:#E1E1E1"></div>
<div class="a" style="left:1281px;top:270px;width:1px;height:23px;background:#DADADA"></div>
<div class="a" style="left:1281px;top:293px;width:1px;height:660px;background:#E1E1E1"></div>
<div class="a" style="left:1361px;top:270px;width:1px;height:23px;background:#DADADA"></div>
<div class="a" style="left:1361px;top:293px;width:1px;height:660px;background:#E1E1E1"></div>
<div class="a" style="left:1441px;top:270px;width:1px;height:23px;background:#DADADA"></div>
<div class="a" style="left:1441px;top:293px;width:1px;height:660px;background:#E1E1E1"></div>
<div class="a" style="left:1521px;top:270px;width:1px;height:23px;background:#DADADA"></div>
<div class="a" style="left:1521px;top:293px;width:1px;height:660px;background:#E1E1E1"></div>
<div class="a" style="left:1601px;top:270px;width:1px;height:23px;background:#DADADA"></div>
<div class="a" style="left:1601px;top:293px;width:1px;height:660px;background:#E1E1E1"></div>
<div class="a" style="left:1681px;top:270px;width:1px;height:23px;background:#DADADA"></div>
<div class="a" style="left:1681px;top:293px;width:1px;height:660px;background:#E1E1E1"></div>
<div class="a" style="left:1761px;top:270px;width:1px;height:23px;background:#DADADA"></div>
<div class="a" style="left:1761px;top:293px;width:1px;height:660px;background:#E1E1E1"></div>
<div class="a" style="left:1841px;top:270px;width:1px;height:23px;background:#DADADA"></div>
<div class="a" style="left:1841px;top:293px;width:1px;height:660px;background:#E1E1E1"></div>
<div class="a" style="left:33px;top:293px;width:1px;height:660px;background:#ABABAB"></div>
<div class="a" style="left:33px;top:276px;width:1px;height:17px;background:#DADADA"></div>
<div class="a" style="left:0px;top:349px;width:33px;height:1px;background:#D4D4D4"></div>
<div class="a" style="left:34px;top:349px;width:1860px;height:1px;background:#E1E1E1"></div>
<div class="a" style="left:0px;top:373px;width:33px;height:1px;background:#D4D4D4"></div>
<div class="a" style="left:34px;top:373px;width:1860px;height:1px;background:#E1E1E1"></div>
<div class="a" style="left:0px;top:397px;width:33px;height:1px;background:#D4D4D4"></div>
<div class="a" style="left:34px;top:397px;width:1860px;height:1px;background:#E1E1E1"></div>
<div class="a" style="left:0px;top:421px;width:33px;height:1px;background:#D4D4D4"></div>
<div class="a" style="left:34px;top:421px;width:1860px;height:1px;background:#E1E1E1"></div>
<div class="a" style="left:0px;top:445px;width:33px;height:1px;background:#D4D4D4"></div>
<div class="a" style="left:34px;top:445px;width:1860px;height:1px;background:#E1E1E1"></div>
<div class="a" style="left:0px;top:469px;width:33px;height:1px;background:#D4D4D4"></div>
<div class="a" style="left:34px;top:469px;width:1860px;height:1px;background:#E1E1E1"></div>
<div class="a" style="left:0px;top:493px;width:33px;height:1px;background:#D4D4D4"></div>
<div class="a" style="left:34px;top:493px;width:1860px;height:1px;background:#E1E1E1"></div>
<div class="a" style="left:0px;top:517px;width:33px;height:1px;background:#D4D4D4"></div>
<div class="a" style="left:34px;top:517px;width:1860px;height:1px;background:#E1E1E1"></div>
<div class="a" style="left:0px;top:541px;width:33px;height:1px;background:#D4D4D4"></div>
<div class="a" style="left:34px;top:541px;width:1860px;height:1px;background:#E1E1E1"></div>
<div class="a" style="left:0px;top:565px;width:33px;height:1px;background:#D4D4D4"></div>
<div class="a" style="left:34px;top:565px;width:1860px;height:1px;background:#E1E1E1"></div>
<div class="a" style="left:0px;top:589px;width:33px;height:1px;background:#D4D4D4"></div>
<div class="a" style="left:34px;top:589px;width:1860px;height:1px;background:#E1E1E1"></div>
<div class="a" style="left:0px;top:613px;width:33px;height:1px;background:#D4D4D4"></div>
<div class="a" style="left:34px;top:613px;width:1860px;height:1px;background:#E1E1E1"></div>
<div class="a" style="left:0px;top:637px;width:33px;height:1px;background:#D4D4D4"></div>
<div class="a" style="left:34px;top:637px;width:1860px;height:1px;background:#E1E1E1"></div>
<div class="a" style="left:0px;top:661px;width:33px;height:1px;background:#D4D4D4"></div>
<div class="a" style="left:34px;top:661px;width:1860px;height:1px;background:#E1E1E1"></div>
<div class="a" style="left:0px;top:685px;width:33px;height:1px;background:#D4D4D4"></div>
<div class="a" style="left:34px;top:685px;width:1860px;height:1px;background:#E1E1E1"></div>
<div class="a" style="left:0px;top:709px;width:33px;height:1px;background:#D4D4D4"></div>
<div class="a" style="left:34px;top:709px;width:1860px;height:1px;background:#E1E1E1"></div>
<div class="a" style="left:0px;top:733px;width:33px;height:1px;background:#D4D4D4"></div>
<div class="a" style="left:34px;top:733px;width:1860px;height:1px;background:#E1E1E1"></div>
<div class="a" style="left:0px;top:757px;width:33px;height:1px;background:#D4D4D4"></div>
<div class="a" style="left:34px;top:757px;width:1860px;height:1px;background:#E1E1E1"></div>
<div class="a" style="left:0px;top:781px;width:33px;height:1px;background:#D4D4D4"></div>
<div class="a" style="left:34px;top:781px;width:1860px;height:1px;background:#E1E1E1"></div>
<div class="a" style="left:0px;top:805px;width:33px;height:1px;background:#D4D4D4"></div>
<div class="a" style="left:34px;top:805px;width:1860px;height:1px;background:#E1E1E1"></div>
<div class="a" style="left:0px;top:829px;width:33px;height:1px;background:#D4D4D4"></div>
<div class="a" style="left:34px;top:829px;width:1860px;height:1px;background:#E1E1E1"></div>
<div class="a" style="left:0px;top:853px;width:33px;height:1px;background:#D4D4D4"></div>
<div class="a" style="left:34px;top:853px;width:1860px;height:1px;background:#E1E1E1"></div>
<div class="a" style="left:0px;top:877px;width:33px;height:1px;background:#D4D4D4"></div>
<div class="a" style="left:34px;top:877px;width:1860px;height:1px;background:#E1E1E1"></div>
<div class="a" style="left:0px;top:901px;width:33px;height:1px;background:#D4D4D4"></div>
<div class="a" style="left:34px;top:901px;width:1860px;height:1px;background:#E1E1E1"></div>
<div class="a" style="left:0px;top:925px;width:33px;height:1px;background:#D4D4D4"></div>
<div class="a" style="left:34px;top:925px;width:1860px;height:1px;background:#E1E1E1"></div>
<div class="a" style="left:0px;top:949px;width:33px;height:1px;background:#D4D4D4"></div>
<div class="a" style="left:34px;top:949px;width:1860px;height:1px;background:#E1E1E1"></div>
<div class="a" style="left:0px;top:293px;width:1894px;height:1px;background:#ABABAB"></div>
<div class="a" style="left:1281px;top:292px;width:81px;height:2px;background:#107C41"></div>
<div class="a" style="left:32px;top:397px;width:2px;height:25px;background:#107C41"></div>
<div class="t" style="left:-290.0px;width:800px;text-align:center;top:274.63px;font-size:15.8px;color:#444444;font-weight:normal;">A</div>
<div class="t" style="left:-152.0px;width:800px;text-align:center;top:274.63px;font-size:15.8px;color:#444444;font-weight:normal;">B</div>
<div class="t" style="left:-37.0px;width:800px;text-align:center;top:274.63px;font-size:15.8px;color:#444444;font-weight:normal;">C</div>
<div class="t" style="left:82.0px;width:800px;text-align:center;top:274.63px;font-size:15.8px;color:#444444;font-weight:normal;">D</div>
<div class="t" style="left:208.0px;width:800px;text-align:center;top:274.63px;font-size:15.8px;color:#444444;font-weight:normal;">E</div>
<div class="t" style="left:372.0px;width:800px;text-align:center;top:274.63px;font-size:15.8px;color:#444444;font-weight:normal;">F</div>
<div class="t" style="left:522.0px;width:800px;text-align:center;top:274.63px;font-size:15.8px;color:#444444;font-weight:normal;">G</div>
<div class="t" style="left:638.5px;width:800px;text-align:center;top:274.63px;font-size:15.8px;color:#444444;font-weight:normal;">H</div>
<div class="t" style="left:754.5px;width:800px;text-align:center;top:274.63px;font-size:15.8px;color:#444444;font-weight:normal;">I</div>
<div class="t" style="left:841.0px;width:800px;text-align:center;top:274.63px;font-size:15.8px;color:#444444;font-weight:normal;">J</div>
<div class="t" style="left:921.0px;width:800px;text-align:center;top:274.63px;font-size:15.8px;color:#107C41;font-weight:normal;">K</div>
<div class="t" style="left:1001.0px;width:800px;text-align:center;top:274.63px;font-size:15.8px;color:#444444;font-weight:normal;">L</div>
<div class="t" style="left:1081.0px;width:800px;text-align:center;top:274.63px;font-size:15.8px;color:#444444;font-weight:normal;">M</div>
<div class="t" style="left:1161.0px;width:800px;text-align:center;top:274.63px;font-size:15.8px;color:#444444;font-weight:normal;">N</div>
<div class="t" style="left:1241.0px;width:800px;text-align:center;top:274.63px;font-size:15.8px;color:#444444;font-weight:normal;">O</div>
<div class="t" style="left:1321.0px;width:800px;text-align:center;top:274.63px;font-size:15.8px;color:#444444;font-weight:normal;">P</div>
<div class="t" style="left:1401.0px;width:800px;text-align:center;top:274.63px;font-size:15.8px;color:#444444;font-weight:normal;">Q</div>
<div class="t" style="left:1482.0px;width:800px;text-align:center;top:274.63px;font-size:15.8px;color:#444444;font-weight:normal;">R</div>
<div class="t" style="left:-382.7px;width:800px;text-align:center;top:323.43px;font-size:15.8px;color:#444444;font-weight:normal;">1</div>
<div class="t" style="left:-382.7px;width:800px;text-align:center;top:354.63px;font-size:15.8px;color:#444444;font-weight:normal;">2</div>
<div class="t" style="left:-382.7px;width:800px;text-align:center;top:378.63px;font-size:15.8px;color:#444444;font-weight:normal;">3</div>
<div class="t" style="left:-382.7px;width:800px;text-align:center;top:402.63px;font-size:15.8px;color:#107C41;font-weight:normal;">4</div>
<div class="t" style="left:-382.7px;width:800px;text-align:center;top:426.63px;font-size:15.8px;color:#444444;font-weight:normal;">5</div>
<div class="t" style="left:-382.7px;width:800px;text-align:center;top:450.63px;font-size:15.8px;color:#444444;font-weight:normal;">6</div>
<div class="t" style="left:-382.7px;width:800px;text-align:center;top:474.63px;font-size:15.8px;color:#444444;font-weight:normal;">7</div>
<div class="t" style="left:-382.7px;width:800px;text-align:center;top:498.63px;font-size:15.8px;color:#444444;font-weight:normal;">8</div>
<div class="t" style="left:-382.7px;width:800px;text-align:center;top:522.63px;font-size:15.8px;color:#444444;font-weight:normal;">9</div>
<div class="t" style="left:-382.7px;width:800px;text-align:center;top:546.63px;font-size:15.8px;color:#444444;font-weight:normal;">10</div>
<div class="t" style="left:-382.7px;width:800px;text-align:center;top:570.63px;font-size:15.8px;color:#444444;font-weight:normal;">11</div>
<div class="t" style="left:-382.7px;width:800px;text-align:center;top:594.63px;font-size:15.8px;color:#444444;font-weight:normal;">12</div>
<div class="t" style="left:-382.7px;width:800px;text-align:center;top:618.63px;font-size:15.8px;color:#444444;font-weight:normal;">13</div>
<div class="t" style="left:-382.7px;width:800px;text-align:center;top:642.63px;font-size:15.8px;color:#444444;font-weight:normal;">14</div>
<div class="t" style="left:-382.7px;width:800px;text-align:center;top:666.63px;font-size:15.8px;color:#444444;font-weight:normal;">15</div>
<div class="t" style="left:-382.7px;width:800px;text-align:center;top:690.63px;font-size:15.8px;color:#444444;font-weight:normal;">16</div>
<div class="t" style="left:-382.7px;width:800px;text-align:center;top:714.63px;font-size:15.8px;color:#444444;font-weight:normal;">17</div>
<div class="t" style="left:-382.7px;width:800px;text-align:center;top:738.63px;font-size:15.8px;color:#444444;font-weight:normal;">18</div>
<div class="t" style="left:-382.7px;width:800px;text-align:center;top:762.63px;font-size:15.8px;color:#444444;font-weight:normal;">19</div>
<div class="t" style="left:-382.7px;width:800px;text-align:center;top:786.63px;font-size:15.8px;color:#444444;font-weight:normal;">20</div>
<div class="t" style="left:-382.7px;width:800px;text-align:center;top:810.63px;font-size:15.8px;color:#444444;font-weight:normal;">21</div>
<div class="t" style="left:-382.7px;width:800px;text-align:center;top:834.63px;font-size:15.8px;color:#444444;font-weight:normal;">22</div>
<div class="t" style="left:-382.7px;width:800px;text-align:center;top:858.63px;font-size:15.8px;color:#444444;font-weight:normal;">23</div>
<div class="t" style="left:-382.7px;width:800px;text-align:center;top:882.63px;font-size:15.8px;color:#444444;font-weight:normal;">24</div>
<div class="t" style="left:-382.7px;width:800px;text-align:center;top:906.63px;font-size:15.8px;color:#444444;font-weight:normal;">25</div>
<div class="t" style="left:-382.7px;width:800px;text-align:center;top:930.63px;font-size:15.8px;color:#444444;font-weight:normal;">26</div>
<div class="a" style="left:34px;top:421px;width:1168px;height:23px;background:#FFC000"></div>
<div class="a" style="left:34px;top:444px;width:1168px;height:1px;background:#FFFFFF"></div>
<div class="a" style="left:34px;top:446px;width:1168px;height:23px;background:#FFE699"></div>
<div class="a" style="left:34px;top:445px;width:1168px;height:1px;background:#FFFFFF"></div>
<div class="a" style="left:34px;top:470px;width:1168px;height:23px;background:#FFF2CC"></div>
<div class="a" style="left:34px;top:469px;width:1168px;height:1px;background:#FFFFFF"></div>
<div class="a" style="left:34px;top:494px;width:1168px;height:23px;background:#FFE699"></div>
<div class="a" style="left:34px;top:493px;width:1168px;height:1px;background:#FFFFFF"></div>
<div class="a" style="left:34px;top:518px;width:1168px;height:23px;background:#FFF2CC"></div>
<div class="a" style="left:34px;top:517px;width:1168px;height:1px;background:#FFFFFF"></div>
<div class="a" style="left:34px;top:542px;width:1168px;height:23px;background:#FFE699"></div>
<div class="a" style="left:34px;top:541px;width:1168px;height:1px;background:#FFFFFF"></div>
<div class="a" style="left:34px;top:566px;width:1168px;height:23px;background:#FFF2CC"></div>
<div class="a" style="left:34px;top:565px;width:1168px;height:1px;background:#FFFFFF"></div>
<div class="a" style="left:34px;top:590px;width:1168px;height:23px;background:#FFE699"></div>
<div class="a" style="left:34px;top:589px;width:1168px;height:1px;background:#FFFFFF"></div>
<div class="a" style="left:34px;top:614px;width:1168px;height:23px;background:#FFF2CC"></div>
<div class="a" style="left:34px;top:613px;width:1168px;height:1px;background:#FFFFFF"></div>
<div class="a" style="left:34px;top:638px;width:1168px;height:23px;background:#FFE699"></div>
<div class="a" style="left:34px;top:637px;width:1168px;height:1px;background:#FFFFFF"></div>
<div class="a" style="left:34px;top:662px;width:1168px;height:23px;background:#FFF2CC"></div>
<div class="a" style="left:34px;top:661px;width:1168px;height:1px;background:#FFFFFF"></div>
<div class="a" style="left:34px;top:686px;width:1168px;height:23px;background:#FFE699"></div>
<div class="a" style="left:34px;top:685px;width:1168px;height:1px;background:#FFFFFF"></div>
<div class="a" style="left:34px;top:710px;width:1168px;height:23px;background:#FFF2CC"></div>
<div class="a" style="left:34px;top:709px;width:1168px;height:1px;background:#FFFFFF"></div>
<div class="a" style="left:34px;top:734px;width:1168px;height:23px;background:#FFE699"></div>
<div class="a" style="left:34px;top:733px;width:1168px;height:1px;background:#FFFFFF"></div>
<div class="a" style="left:34px;top:758px;width:1168px;height:23px;background:#FFF2CC"></div>
<div class="a" style="left:34px;top:757px;width:1168px;height:1px;background:#FFFFFF"></div>
<div class="a" style="left:34px;top:782px;width:1168px;height:23px;background:#FFE699"></div>
<div class="a" style="left:34px;top:781px;width:1168px;height:1px;background:#FFFFFF"></div>
<div class="a" style="left:34px;top:806px;width:1168px;height:23px;background:#FFF2CC"></div>
<div class="a" style="left:34px;top:805px;width:1168px;height:1px;background:#FFFFFF"></div>
<div class="a" style="left:34px;top:830px;width:1168px;height:23px;background:#FFE699"></div>
<div class="a" style="left:34px;top:829px;width:1168px;height:1px;background:#FFFFFF"></div>
<div class="a" style="left:34px;top:854px;width:1168px;height:23px;background:#FFF2CC"></div>
<div class="a" style="left:34px;top:853px;width:1168px;height:1px;background:#FFFFFF"></div>
<div class="a" style="left:34px;top:878px;width:1168px;height:23px;background:#FFE699"></div>
<div class="a" style="left:34px;top:877px;width:1168px;height:1px;background:#FFFFFF"></div>
<div class="a" style="left:34px;top:902px;width:1168px;height:23px;background:#FFF2CC"></div>
<div class="a" style="left:34px;top:901px;width:1168px;height:1px;background:#FFFFFF"></div>
<div class="a" style="left:34px;top:926px;width:1168px;height:23px;background:#FFE699"></div>
<div class="a" style="left:34px;top:925px;width:1168px;height:1px;background:#FFFFFF"></div>
<div class="a" style="left:34px;top:950px;width:1168px;height:2px;background:#FFF2CC"></div>
<div class="a" style="left:34px;top:949px;width:1168px;height:1px;background:#FFFFFF"></div>
<div class="a" style="left:34px;top:446px;width:1168px;height:1px;background:#FFFFFF"></div>
<div class="a" style="left:187px;top:421px;width:1px;height:532px;background:#FFFFFF"></div>
<div class="a" style="left:309px;top:421px;width:1px;height:532px;background:#FFFFFF"></div>
<div class="a" style="left:417px;top:421px;width:1px;height:532px;background:#FFFFFF"></div>
<div class="a" style="left:547px;top:421px;width:1px;height:532px;background:#FFFFFF"></div>
<div class="a" style="left:669px;top:421px;width:1px;height:532px;background:#FFFFFF"></div>
<div class="a" style="left:875px;top:421px;width:1px;height:532px;background:#FFFFFF"></div>
<div class="a" style="left:969px;top:421px;width:1px;height:532px;background:#FFFFFF"></div>
<div class="a" style="left:1108px;top:421px;width:1px;height:532px;background:#FFFFFF"></div>
<div class="a" style="left:0px;top:445px;width:1894px;height:1px;background:#9B9B9B"></div>
<div class="a" style="left:166px;top:423px;width:19px;height:19px;border:1px solid #A9B0BE;background:linear-gradient(#FFFFFF,#EDEFF4)"></div>
<svg class="a" style="left:172.5px;top:432px;overflow:visible" width="8" height="4" viewBox="0 0 8 4"><path d="M0 0 L8 0 L4 4 Z" fill="#5A5A5A"/></svg>
<div class="t" style="left:37px;transform-origin:0 0;top:426.26px;font-size:16px;color:#FFFFFF;font-weight:bold;transform:scaleX(1.0140);">Incident Number</div>
<div class="a" style="left:288px;top:423px;width:19px;height:19px;border:1px solid #A9B0BE;background:linear-gradient(#FFFFFF,#EDEFF4)"></div>
<svg class="a" style="left:294.5px;top:432px;overflow:visible" width="8" height="4" viewBox="0 0 8 4"><path d="M0 0 L8 0 L4 4 Z" fill="#5A5A5A"/></svg>
<div class="t" style="left:191.5px;transform-origin:0 0;top:426.26px;font-size:16px;color:#FFFFFF;font-weight:bold;transform:scaleX(0.9995);">Date created</div>
<div class="a" style="left:396px;top:423px;width:19px;height:19px;border:1px solid #A9B0BE;background:linear-gradient(#FFFFFF,#EDEFF4)"></div>
<svg class="a" style="left:402.5px;top:432px;overflow:visible" width="8" height="4" viewBox="0 0 8 4"><path d="M0 0 L8 0 L4 4 Z" fill="#5A5A5A"/></svg>
<div class="t" style="left:313.5px;transform-origin:0 0;top:426.26px;font-size:16px;color:#FFFFFF;font-weight:bold;transform:scaleX(0.9886);">Last Name</div>
<div class="a" style="left:526px;top:423px;width:19px;height:19px;border:1px solid #A9B0BE;background:linear-gradient(#FFFFFF,#EDEFF4)"></div>
<svg class="a" style="left:532.5px;top:432px;overflow:visible" width="8" height="4" viewBox="0 0 8 4"><path d="M0 0 L8 0 L4 4 Z" fill="#5A5A5A"/></svg>
<div class="t" style="left:421.5px;transform-origin:0 0;top:426.26px;font-size:16px;color:#FFFFFF;font-weight:bold;transform:scaleX(0.9962);">Agent Name</div>
<div class="a" style="left:648px;top:423px;width:19px;height:19px;border:1px solid #A9B0BE;background:linear-gradient(#FFFFFF,#EDEFF4)"></div>
<svg class="a" style="left:654.5px;top:432px;overflow:visible" width="8" height="4" viewBox="0 0 8 4"><path d="M0 0 L8 0 L4 4 Z" fill="#5A5A5A"/></svg>
<div class="t" style="left:551.5px;transform-origin:0 0;top:426.26px;font-size:16px;color:#FFFFFF;font-weight:bold;transform:scaleX(0.9969);">Computer ID</div>
<div class="a" style="left:854px;top:423px;width:19px;height:19px;border:1px solid #A9B0BE;background:linear-gradient(#FFFFFF,#EDEFF4)"></div>
<svg class="a" style="left:860.5px;top:432px;overflow:visible" width="8" height="4" viewBox="0 0 8 4"><path d="M0 0 L8 0 L4 4 Z" fill="#5A5A5A"/></svg>
<div class="t" style="left:372.5px;width:800px;text-align:center;top:426.26px;font-size:16px;color:#FFFFFF;font-weight:bold;transform:scaleX(0.9657);">Description</div>
<div class="a" style="left:948px;top:423px;width:19px;height:19px;border:1px solid #A9B0BE;background:linear-gradient(#FFFFFF,#EDEFF4)"></div>
<svg class="a" style="left:954.5px;top:432px;overflow:visible" width="8" height="4" viewBox="0 0 8 4"><path d="M0 0 L8 0 L4 4 Z" fill="#5A5A5A"/></svg>
<div class="t" style="left:879.5px;transform-origin:0 0;top:426.26px;font-size:16px;color:#FFFFFF;font-weight:bold;transform:scaleX(0.9571);">Status</div>
<div class="a" style="left:1087px;top:423px;width:19px;height:19px;border:1px solid #A9B0BE;background:linear-gradient(#FFFFFF,#EDEFF4)"></div>
<svg class="a" style="left:1093.5px;top:432px;overflow:visible" width="8" height="4" viewBox="0 0 8 4"><path d="M0 0 L8 0 L4 4 Z" fill="#5A5A5A"/></svg>
<div class="t" style="left:973.5px;transform-origin:0 0;top:426.26px;font-size:16px;color:#FFFFFF;font-weight:bold;transform:scaleX(0.9649);">Date Resolved</div>
<div class="a" style="left:1180px;top:423px;width:19px;height:19px;border:1px solid #A9B0BE;background:linear-gradient(#FFFFFF,#EDEFF4)"></div>
<svg class="a" style="left:1186.5px;top:432px;overflow:visible" width="8" height="4" viewBox="0 0 8 4"><path d="M0 0 L8 0 L4 4 Z" fill="#5A5A5A"/></svg>
<div class="t" style="left:1112.5px;transform-origin:0 0;top:426.26px;font-size:16px;color:#1F6FC5;font-weight:bold;transform:scaleX(0.9122);">Duration</div>
<div class="t" style="left:37.5px;transform-origin:0 0;top:449.99px;font-size:16.2px;color:#000000;font-weight:normal;">939-76160</div>
<div class="t" style="left:-495px;width:800px;text-align:right;transform-origin:100% 0;top:449.99px;font-size:16.2px;color:#000000;font-weight:normal;">1<span style="margin:0 1.2px">/</span>1<span style="margin:0 1.2px">/</span>2021</div>
<div class="t" style="left:313px;transform-origin:0 0;top:449.99px;font-size:16.2px;color:#000000;font-weight:normal;">Norris</div>
<div class="t" style="left:421px;transform-origin:0 0;top:449.99px;font-size:16.2px;color:#000000;font-weight:normal;">Cox</div>
<div class="t" style="left:-135px;width:800px;text-align:right;transform-origin:100% 0;top:449.99px;font-size:16.2px;color:#000000;font-weight:normal;">3141</div>
<div class="t" style="left:372.5px;width:800px;text-align:center;top:449.99px;font-size:16.2px;color:#000000;font-weight:normal;">Forgotten Password</div>
<div class="t" style="left:879px;transform-origin:0 0;top:449.99px;font-size:16.2px;color:#000000;font-weight:normal;">Open</div>
<div class="t" style="left:304px;width:800px;text-align:right;transform-origin:100% 0;top:449.99px;font-size:16.2px;color:#000000;font-weight:normal;">2<span style="margin:0 1.2px">/</span>6<span style="margin:0 1.2px">/</span>2021</div>
<div class="t" style="left:397px;width:800px;text-align:right;transform-origin:100% 0;top:449.99px;font-size:16.2px;color:#000000;font-weight:normal;">36</div>
<div class="t" style="left:37.5px;transform-origin:0 0;top:473.99px;font-size:16.2px;color:#000000;font-weight:normal;">712-90501</div>
<div class="t" style="left:-495px;width:800px;text-align:right;transform-origin:100% 0;top:473.99px;font-size:16.2px;color:#000000;font-weight:normal;">1<span style="margin:0 1.2px">/</span>1<span style="margin:0 1.2px">/</span>2021</div>
<div class="t" style="left:313px;transform-origin:0 0;top:473.99px;font-size:16.2px;color:#000000;font-weight:normal;">Harvey</div>
<div class="t" style="left:421px;transform-origin:0 0;top:473.99px;font-size:16.2px;color:#000000;font-weight:normal;">Rousaux</div>
<div class="t" style="left:-135px;width:800px;text-align:right;transform-origin:100% 0;top:473.99px;font-size:16.2px;color:#000000;font-weight:normal;">5995</div>
<div class="t" style="left:372.5px;width:800px;text-align:center;top:473.99px;font-size:16.2px;color:#000000;font-weight:normal;">Forgotten Password</div>
<div class="t" style="left:879px;transform-origin:0 0;top:473.99px;font-size:16.2px;color:#000000;font-weight:normal;">Open</div>
<div class="t" style="left:304px;width:800px;text-align:right;transform-origin:100% 0;top:473.99px;font-size:16.2px;color:#000000;font-weight:normal;">1<span style="margin:0 1.2px">/</span>19<span style="margin:0 1.2px">/</span>2021</div>
<div class="t" style="left:397px;width:800px;text-align:right;transform-origin:100% 0;top:473.99px;font-size:16.2px;color:#000000;font-weight:normal;">18</div>
<div class="t" style="left:37.5px;transform-origin:0 0;top:497.99px;font-size:16.2px;color:#000000;font-weight:normal;">354-52747</div>
<div class="t" style="left:-495px;width:800px;text-align:right;transform-origin:100% 0;top:497.99px;font-size:16.2px;color:#000000;font-weight:normal;">1<span style="margin:0 1.2px">/</span>7<span style="margin:0 1.2px">/</span>2021</div>
<div class="t" style="left:313px;transform-origin:0 0;top:497.99px;font-size:16.2px;color:#000000;font-weight:normal;">Neal</div>
<div class="t" style="left:421px;transform-origin:0 0;top:497.99px;font-size:16.2px;color:#000000;font-weight:normal;">Rousaux</div>
<div class="t" style="left:-135px;width:800px;text-align:right;transform-origin:100% 0;top:497.99px;font-size:16.2px;color:#000000;font-weight:normal;">9380</div>
<div class="t" style="left:372.5px;width:800px;text-align:center;top:497.99px;font-size:16.2px;color:#000000;font-weight:normal;">Software Update</div>
<div class="t" style="left:879px;transform-origin:0 0;top:497.99px;font-size:16.2px;color:#000000;font-weight:normal;">Hold</div>
<div class="t" style="left:304px;width:800px;text-align:right;transform-origin:100% 0;top:497.99px;font-size:16.2px;color:#000000;font-weight:normal;">1<span style="margin:0 1.2px">/</span>24<span style="margin:0 1.2px">/</span>2021</div>
<div class="t" style="left:397px;width:800px;text-align:right;transform-origin:100% 0;top:497.99px;font-size:16.2px;color:#000000;font-weight:normal;">17</div>
<div class="t" style="left:37.5px;transform-origin:0 0;top:521.99px;font-size:16.2px;color:#000000;font-weight:normal;">354-52747</div>
<div class="t" style="left:-495px;width:800px;text-align:right;transform-origin:100% 0;top:521.99px;font-size:16.2px;color:#000000;font-weight:normal;">1<span style="margin:0 1.2px">/</span>7<span style="margin:0 1.2px">/</span>2021</div>
<div class="t" style="left:313px;transform-origin:0 0;top:521.99px;font-size:16.2px;color:#000000;font-weight:normal;">Neal</div>
<div class="t" style="left:421px;transform-origin:0 0;top:521.99px;font-size:16.2px;color:#000000;font-weight:normal;">Rousaux</div>
<div class="t" style="left:-135px;width:800px;text-align:right;transform-origin:100% 0;top:521.99px;font-size:16.2px;color:#000000;font-weight:normal;">9380</div>
<div class="t" style="left:372.5px;width:800px;text-align:center;top:521.99px;font-size:16.2px;color:#000000;font-weight:normal;">Software Update</div>
<div class="t" style="left:879px;transform-origin:0 0;top:521.99px;font-size:16.2px;color:#000000;font-weight:normal;">Hold</div>
<div class="t" style="left:304px;width:800px;text-align:right;transform-origin:100% 0;top:521.99px;font-size:16.2px;color:#000000;font-weight:normal;">1<span style="margin:0 1.2px">/</span>24<span style="margin:0 1.2px">/</span>2021</div>
<div class="t" style="left:397px;width:800px;text-align:right;transform-origin:100% 0;top:521.99px;font-size:16.2px;color:#000000;font-weight:normal;">17</div>
<div class="t" style="left:37.5px;transform-origin:0 0;top:545.99px;font-size:16.2px;color:#000000;font-weight:normal;">859-45748</div>
<div class="t" style="left:-495px;width:800px;text-align:right;transform-origin:100% 0;top:545.99px;font-size:16.2px;color:#000000;font-weight:normal;">1<span style="margin:0 1.2px">/</span>11<span style="margin:0 1.2px">/</span>2021</div>
<div class="t" style="left:313px;transform-origin:0 0;top:545.99px;font-size:16.2px;color:#000000;font-weight:normal;">Lee</div>
<div class="t" style="left:421px;transform-origin:0 0;top:545.99px;font-size:16.2px;color:#000000;font-weight:normal;">Vong</div>
<div class="t" style="left:-135px;width:800px;text-align:right;transform-origin:100% 0;top:545.99px;font-size:16.2px;color:#000000;font-weight:normal;">5070</div>
<div class="t" style="left:372.5px;width:800px;text-align:center;top:545.99px;font-size:16.2px;color:#000000;font-weight:normal;">Virus</div>
<div class="t" style="left:879px;transform-origin:0 0;top:545.99px;font-size:16.2px;color:#000000;font-weight:normal;">Closed</div>
<div class="t" style="left:304px;width:800px;text-align:right;transform-origin:100% 0;top:545.99px;font-size:16.2px;color:#000000;font-weight:normal;">1<span style="margin:0 1.2px">/</span>18<span style="margin:0 1.2px">/</span>2021</div>
<div class="t" style="left:397px;width:800px;text-align:right;transform-origin:100% 0;top:545.99px;font-size:16.2px;color:#000000;font-weight:normal;">7</div>
<div class="t" style="left:37.5px;transform-origin:0 0;top:569.99px;font-size:16.2px;color:#000000;font-weight:normal;">610-12016</div>
<div class="t" style="left:-495px;width:800px;text-align:right;transform-origin:100% 0;top:569.99px;font-size:16.2px;color:#000000;font-weight:normal;">1<span style="margin:0 1.2px">/</span>13<span style="margin:0 1.2px">/</span>2021</div>
<div class="t" style="left:313px;transform-origin:0 0;top:569.99px;font-size:16.2px;color:#000000;font-weight:normal;">Glover</div>
<div class="t" style="left:421px;transform-origin:0 0;top:569.99px;font-size:16.2px;color:#000000;font-weight:normal;">Leggett</div>
<div class="t" style="left:-135px;width:800px;text-align:right;transform-origin:100% 0;top:569.99px;font-size:16.2px;color:#000000;font-weight:normal;">5891</div>
<div class="t" style="left:372.5px;width:800px;text-align:center;top:569.99px;font-size:16.2px;color:#000000;font-weight:normal;">Forgotten Password</div>
<div class="t" style="left:879px;transform-origin:0 0;top:569.99px;font-size:16.2px;color:#000000;font-weight:normal;">Hold</div>
<div class="t" style="left:304px;width:800px;text-align:right;transform-origin:100% 0;top:569.99px;font-size:16.2px;color:#000000;font-weight:normal;">1<span style="margin:0 1.2px">/</span>18<span style="margin:0 1.2px">/</span>2021</div>
<div class="t" style="left:397px;width:800px;text-align:right;transform-origin:100% 0;top:569.99px;font-size:16.2px;color:#000000;font-weight:normal;">5</div>
<div class="t" style="left:37.5px;transform-origin:0 0;top:593.99px;font-size:16.2px;color:#000000;font-weight:normal;">459-84377</div>
<div class="t" style="left:-495px;width:800px;text-align:right;transform-origin:100% 0;top:593.99px;font-size:16.2px;color:#000000;font-weight:normal;">1<span style="margin:0 1.2px">/</span>13<span style="margin:0 1.2px">/</span>2021</div>
<div class="t" style="left:313px;transform-origin:0 0;top:593.99px;font-size:16.2px;color:#000000;font-weight:normal;">Barnett</div>
<div class="t" style="left:421px;transform-origin:0 0;top:593.99px;font-size:16.2px;color:#000000;font-weight:normal;">Vong</div>
<div class="t" style="left:-135px;width:800px;text-align:right;transform-origin:100% 0;top:593.99px;font-size:16.2px;color:#000000;font-weight:normal;">1251</div>
<div class="t" style="left:372.5px;width:800px;text-align:center;top:593.99px;font-size:16.2px;color:#000000;font-weight:normal;">Printing Issues</div>
<div class="t" style="left:879px;transform-origin:0 0;top:593.99px;font-size:16.2px;color:#000000;font-weight:normal;">Hold</div>
<div class="t" style="left:304px;width:800px;text-align:right;transform-origin:100% 0;top:593.99px;font-size:16.2px;color:#000000;font-weight:normal;">2<span style="margin:0 1.2px">/</span>6<span style="margin:0 1.2px">/</span>2021</div>
<div class="t" style="left:397px;width:800px;text-align:right;transform-origin:100% 0;top:593.99px;font-size:16.2px;color:#000000;font-weight:normal;">24</div>
<div class="t" style="left:37.5px;transform-origin:0 0;top:617.99px;font-size:16.2px;color:#000000;font-weight:normal;">218-35195</div>
<div class="t" style="left:-495px;width:800px;text-align:right;transform-origin:100% 0;top:617.99px;font-size:16.2px;color:#000000;font-weight:normal;">1<span style="margin:0 1.2px">/</span>13<span style="margin:0 1.2px">/</span>2021</div>
<div class="t" style="left:313px;transform-origin:0 0;top:617.99px;font-size:16.2px;color:#000000;font-weight:normal;">Ross</div>
<div class="t" style="left:421px;transform-origin:0 0;top:617.99px;font-size:16.2px;color:#000000;font-weight:normal;">Rousaux</div>
<div class="t" style="left:-135px;width:800px;text-align:right;transform-origin:100% 0;top:617.99px;font-size:16.2px;color:#000000;font-weight:normal;">6735</div>
<div class="t" style="left:372.5px;width:800px;text-align:center;top:617.99px;font-size:16.2px;color:#000000;font-weight:normal;">Virus</div>
<div class="t" style="left:879px;transform-origin:0 0;top:617.99px;font-size:16.2px;color:#000000;font-weight:normal;">Closed</div>
<div class="t" style="left:304px;width:800px;text-align:right;transform-origin:100% 0;top:617.99px;font-size:16.2px;color:#000000;font-weight:normal;">1<span style="margin:0 1.2px">/</span>27<span style="margin:0 1.2px">/</span>2021</div>
<div class="t" style="left:397px;width:800px;text-align:right;transform-origin:100% 0;top:617.99px;font-size:16.2px;color:#000000;font-weight:normal;">14</div>
<div class="t" style="left:37.5px;transform-origin:0 0;top:641.99px;font-size:16.2px;color:#000000;font-weight:normal;">140-57449</div>
<div class="t" style="left:-495px;width:800px;text-align:right;transform-origin:100% 0;top:641.99px;font-size:16.2px;color:#000000;font-weight:normal;">1<span style="margin:0 1.2px">/</span>14<span style="margin:0 1.2px">/</span>2021</div>
<div class="t" style="left:313px;transform-origin:0 0;top:641.99px;font-size:16.2px;color:#000000;font-weight:normal;">Pearson</div>
<div class="t" style="left:421px;transform-origin:0 0;top:641.99px;font-size:16.2px;color:#000000;font-weight:normal;">Vong</div>
<div class="t" style="left:-135px;width:800px;text-align:right;transform-origin:100% 0;top:641.99px;font-size:16.2px;color:#000000;font-weight:normal;">6235</div>
<div class="t" style="left:372.5px;width:800px;text-align:center;top:641.99px;font-size:16.2px;color:#000000;font-weight:normal;">Will not power on</div>
<div class="t" style="left:879px;transform-origin:0 0;top:641.99px;font-size:16.2px;color:#000000;font-weight:normal;">Hold</div>
<div class="t" style="left:304px;width:800px;text-align:right;transform-origin:100% 0;top:641.99px;font-size:16.2px;color:#000000;font-weight:normal;">2<span style="margin:0 1.2px">/</span>2<span style="margin:0 1.2px">/</span>2021</div>
<div class="t" style="left:397px;width:800px;text-align:right;transform-origin:100% 0;top:641.99px;font-size:16.2px;color:#000000;font-weight:normal;">19</div>
<div class="t" style="left:37.5px;transform-origin:0 0;top:665.99px;font-size:16.2px;color:#000000;font-weight:normal;">399-98477</div>
<div class="t" style="left:-495px;width:800px;text-align:right;transform-origin:100% 0;top:665.99px;font-size:16.2px;color:#000000;font-weight:normal;">1<span style="margin:0 1.2px">/</span>15<span style="margin:0 1.2px">/</span>2021</div>
<div class="t" style="left:313px;transform-origin:0 0;top:665.99px;font-size:16.2px;color:#000000;font-weight:normal;">King</div>
<div class="t" style="left:421px;transform-origin:0 0;top:665.99px;font-size:16.2px;color:#000000;font-weight:normal;">Vong</div>
<div class="t" style="left:-135px;width:800px;text-align:right;transform-origin:100% 0;top:665.99px;font-size:16.2px;color:#000000;font-weight:normal;">7426</div>
<div class="t" style="left:372.5px;width:800px;text-align:center;top:665.99px;font-size:16.2px;color:#000000;font-weight:normal;">Printing Issues</div>
<div class="t" style="left:879px;transform-origin:0 0;top:665.99px;font-size:16.2px;color:#000000;font-weight:normal;">Closed</div>
<div class="t" style="left:304px;width:800px;text-align:right;transform-origin:100% 0;top:665.99px;font-size:16.2px;color:#000000;font-weight:normal;">1<span style="margin:0 1.2px">/</span>26<span style="margin:0 1.2px">/</span>2021</div>
<div class="t" style="left:397px;width:800px;text-align:right;transform-origin:100% 0;top:665.99px;font-size:16.2px;color:#000000;font-weight:normal;">11</div>
<div class="t" style="left:37.5px;transform-origin:0 0;top:689.99px;font-size:16.2px;color:#000000;font-weight:normal;">657-68422</div>
<div class="t" style="left:-495px;width:800px;text-align:right;transform-origin:100% 0;top:689.99px;font-size:16.2px;color:#000000;font-weight:normal;">1<span style="margin:0 1.2px">/</span>16<span style="margin:0 1.2px">/</span>2021</div>
<div class="t" style="left:313px;transform-origin:0 0;top:689.99px;font-size:16.2px;color:#000000;font-weight:normal;">Washington</div>
<div class="t" style="left:421px;transform-origin:0 0;top:689.99px;font-size:16.2px;color:#000000;font-weight:normal;">Hays</div>
<div class="t" style="left:-135px;width:800px;text-align:right;transform-origin:100% 0;top:689.99px;font-size:16.2px;color:#000000;font-weight:normal;">6405</div>
<div class="t" style="left:372.5px;width:800px;text-align:center;top:689.99px;font-size:16.2px;color:#000000;font-weight:normal;">Software Update</div>
<div class="t" style="left:879px;transform-origin:0 0;top:689.99px;font-size:16.2px;color:#000000;font-weight:normal;">Closed</div>
<div class="t" style="left:304px;width:800px;text-align:right;transform-origin:100% 0;top:689.99px;font-size:16.2px;color:#000000;font-weight:normal;">2<span style="margin:0 1.2px">/</span>9<span style="margin:0 1.2px">/</span>2021</div>
<div class="t" style="left:397px;width:800px;text-align:right;transform-origin:100% 0;top:689.99px;font-size:16.2px;color:#000000;font-weight:normal;">24</div>
<div class="t" style="left:37.5px;transform-origin:0 0;top:713.99px;font-size:16.2px;color:#000000;font-weight:normal;">840-29369</div>
<div class="t" style="left:-495px;width:800px;text-align:right;transform-origin:100% 0;top:713.99px;font-size:16.2px;color:#000000;font-weight:normal;">1<span style="margin:0 1.2px">/</span>17<span style="margin:0 1.2px">/</span>2021</div>
<div class="t" style="left:313px;transform-origin:0 0;top:713.99px;font-size:16.2px;color:#000000;font-weight:normal;">Hopkins</div>
<div class="t" style="left:421px;transform-origin:0 0;top:713.99px;font-size:16.2px;color:#000000;font-weight:normal;">Leggett</div>
<div class="t" style="left:-135px;width:800px;text-align:right;transform-origin:100% 0;top:713.99px;font-size:16.2px;color:#000000;font-weight:normal;">3708</div>
<div class="t" style="left:372.5px;width:800px;text-align:center;top:713.99px;font-size:16.2px;color:#000000;font-weight:normal;">Software Update</div>
<div class="t" style="left:879px;transform-origin:0 0;top:713.99px;font-size:16.2px;color:#000000;font-weight:normal;">Open</div>
<div class="t" style="left:304px;width:800px;text-align:right;transform-origin:100% 0;top:713.99px;font-size:16.2px;color:#000000;font-weight:normal;">2<span style="margin:0 1.2px">/</span>13<span style="margin:0 1.2px">/</span>2021</div>
<div class="t" style="left:397px;width:800px;text-align:right;transform-origin:100% 0;top:713.99px;font-size:16.2px;color:#000000;font-weight:normal;">27</div>
<div class="t" style="left:37.5px;transform-origin:0 0;top:737.99px;font-size:16.2px;color:#000000;font-weight:normal;">285-88931</div>
<div class="t" style="left:-495px;width:800px;text-align:right;transform-origin:100% 0;top:737.99px;font-size:16.2px;color:#000000;font-weight:normal;">1<span style="margin:0 1.2px">/</span>26<span style="margin:0 1.2px">/</span>2021</div>
<div class="t" style="left:313px;transform-origin:0 0;top:737.99px;font-size:16.2px;color:#000000;font-weight:normal;">Bell</div>
<div class="t" style="left:421px;transform-origin:0 0;top:737.99px;font-size:16.2px;color:#000000;font-weight:normal;">Hays</div>
<div class="t" style="left:-135px;width:800px;text-align:right;transform-origin:100% 0;top:737.99px;font-size:16.2px;color:#000000;font-weight:normal;">1756</div>
<div class="t" style="left:372.5px;width:800px;text-align:center;top:737.99px;font-size:16.2px;color:#000000;font-weight:normal;">Printing Issues</div>
<div class="t" style="left:879px;transform-origin:0 0;top:737.99px;font-size:16.2px;color:#000000;font-weight:normal;">Hold</div>
<div class="t" style="left:304px;width:800px;text-align:right;transform-origin:100% 0;top:737.99px;font-size:16.2px;color:#000000;font-weight:normal;">2<span style="margin:0 1.2px">/</span>25<span style="margin:0 1.2px">/</span>2021</div>
<div class="t" style="left:397px;width:800px;text-align:right;transform-origin:100% 0;top:737.99px;font-size:16.2px;color:#000000;font-weight:normal;">30</div>
<div class="t" style="left:37.5px;transform-origin:0 0;top:761.99px;font-size:16.2px;color:#000000;font-weight:normal;">254-39938</div>
<div class="t" style="left:-495px;width:800px;text-align:right;transform-origin:100% 0;top:761.99px;font-size:16.2px;color:#000000;font-weight:normal;">2<span style="margin:0 1.2px">/</span>4<span style="margin:0 1.2px">/</span>2021</div>
<div class="t" style="left:313px;transform-origin:0 0;top:761.99px;font-size:16.2px;color:#000000;font-weight:normal;">Stone</div>
<div class="t" style="left:421px;transform-origin:0 0;top:761.99px;font-size:16.2px;color:#000000;font-weight:normal;">Broadnax</div>
<div class="t" style="left:-135px;width:800px;text-align:right;transform-origin:100% 0;top:761.99px;font-size:16.2px;color:#000000;font-weight:normal;">2971</div>
<div class="t" style="left:372.5px;width:800px;text-align:center;top:761.99px;font-size:16.2px;color:#000000;font-weight:normal;">Will not power on</div>
<div class="t" style="left:879px;transform-origin:0 0;top:761.99px;font-size:16.2px;color:#000000;font-weight:normal;">Closed</div>
<div class="t" style="left:304px;width:800px;text-align:right;transform-origin:100% 0;top:761.99px;font-size:16.2px;color:#000000;font-weight:normal;">2<span style="margin:0 1.2px">/</span>20<span style="margin:0 1.2px">/</span>2021</div>
<div class="t" style="left:397px;width:800px;text-align:right;transform-origin:100% 0;top:761.99px;font-size:16.2px;color:#000000;font-weight:normal;">16</div>
<div class="t" style="left:37.5px;transform-origin:0 0;top:785.99px;font-size:16.2px;color:#000000;font-weight:normal;">733-99609</div>
<div class="t" style="left:-495px;width:800px;text-align:right;transform-origin:100% 0;top:785.99px;font-size:16.2px;color:#000000;font-weight:normal;">2<span style="margin:0 1.2px">/</span>4<span style="margin:0 1.2px">/</span>2021</div>
<div class="t" style="left:313px;transform-origin:0 0;top:785.99px;font-size:16.2px;color:#000000;font-weight:normal;">Alexander</div>
<div class="t" style="left:421px;transform-origin:0 0;top:785.99px;font-size:16.2px;color:#000000;font-weight:normal;">Vong</div>
<div class="t" style="left:-135px;width:800px;text-align:right;transform-origin:100% 0;top:785.99px;font-size:16.2px;color:#000000;font-weight:normal;">9454</div>
<div class="t" style="left:372.5px;width:800px;text-align:center;top:785.99px;font-size:16.2px;color:#000000;font-weight:normal;">Virus</div>
<div class="t" style="left:879px;transform-origin:0 0;top:785.99px;font-size:16.2px;color:#000000;font-weight:normal;">Open</div>
<div class="t" style="left:304px;width:800px;text-align:right;transform-origin:100% 0;top:785.99px;font-size:16.2px;color:#000000;font-weight:normal;">2<span style="margin:0 1.2px">/</span>17<span style="margin:0 1.2px">/</span>2021</div>
<div class="t" style="left:397px;width:800px;text-align:right;transform-origin:100% 0;top:785.99px;font-size:16.2px;color:#000000;font-weight:normal;">13</div>
<div class="t" style="left:37.5px;transform-origin:0 0;top:809.99px;font-size:16.2px;color:#000000;font-weight:normal;">207-19047</div>
<div class="t" style="left:-495px;width:800px;text-align:right;transform-origin:100% 0;top:809.99px;font-size:16.2px;color:#000000;font-weight:normal;">2<span style="margin:0 1.2px">/</span>4<span style="margin:0 1.2px">/</span>2021</div>
<div class="t" style="left:313px;transform-origin:0 0;top:809.99px;font-size:16.2px;color:#000000;font-weight:normal;">Cook</div>
<div class="t" style="left:421px;transform-origin:0 0;top:809.99px;font-size:16.2px;color:#000000;font-weight:normal;">Broadnax</div>
<div class="t" style="left:-135px;width:800px;text-align:right;transform-origin:100% 0;top:809.99px;font-size:16.2px;color:#000000;font-weight:normal;">1850</div>
<div class="t" style="left:372.5px;width:800px;text-align:center;top:809.99px;font-size:16.2px;color:#000000;font-weight:normal;">Virus</div>
<div class="t" style="left:879px;transform-origin:0 0;top:809.99px;font-size:16.2px;color:#000000;font-weight:normal;">Closed</div>
<div class="t" style="left:304px;width:800px;text-align:right;transform-origin:100% 0;top:809.99px;font-size:16.2px;color:#000000;font-weight:normal;">2<span style="margin:0 1.2px">/</span>12<span style="margin:0 1.2px">/</span>2021</div>
<div class="t" style="left:397px;width:800px;text-align:right;transform-origin:100% 0;top:809.99px;font-size:16.2px;color:#000000;font-weight:normal;">8</div>
<div class="t" style="left:37.5px;transform-origin:0 0;top:833.99px;font-size:16.2px;color:#000000;font-weight:normal;">608-25364</div>
<div class="t" style="left:-495px;width:800px;text-align:right;transform-origin:100% 0;top:833.99px;font-size:16.2px;color:#000000;font-weight:normal;">2<span style="margin:0 1.2px">/</span>7<span style="margin:0 1.2px">/</span>2021</div>
<div class="t" style="left:313px;transform-origin:0 0;top:833.99px;font-size:16.2px;color:#000000;font-weight:normal;">Baldwin</div>
<div class="t" style="left:421px;transform-origin:0 0;top:833.99px;font-size:16.2px;color:#000000;font-weight:normal;">Leggett</div>
<div class="t" style="left:-135px;width:800px;text-align:right;transform-origin:100% 0;top:833.99px;font-size:16.2px;color:#000000;font-weight:normal;">4317</div>
<div class="t" style="left:372.5px;width:800px;text-align:center;top:833.99px;font-size:16.2px;color:#000000;font-weight:normal;">Software Update</div>
<div class="t" style="left:879px;transform-origin:0 0;top:833.99px;font-size:16.2px;color:#000000;font-weight:normal;">Open</div>
<div class="t" style="left:304px;width:800px;text-align:right;transform-origin:100% 0;top:833.99px;font-size:16.2px;color:#000000;font-weight:normal;">3<span style="margin:0 1.2px">/</span>6<span style="margin:0 1.2px">/</span>2021</div>
<div class="t" style="left:397px;width:800px;text-align:right;transform-origin:100% 0;top:833.99px;font-size:16.2px;color:#000000;font-weight:normal;">27</div>
<div class="t" style="left:37.5px;transform-origin:0 0;top:857.99px;font-size:16.2px;color:#000000;font-weight:normal;">967-11630</div>
<div class="t" style="left:-495px;width:800px;text-align:right;transform-origin:100% 0;top:857.99px;font-size:16.2px;color:#000000;font-weight:normal;">2<span style="margin:0 1.2px">/</span>9<span style="margin:0 1.2px">/</span>2021</div>
<div class="t" style="left:313px;transform-origin:0 0;top:857.99px;font-size:16.2px;color:#000000;font-weight:normal;">Mendez</div>
<div class="t" style="left:421px;transform-origin:0 0;top:857.99px;font-size:16.2px;color:#000000;font-weight:normal;">Vong</div>
<div class="t" style="left:-135px;width:800px;text-align:right;transform-origin:100% 0;top:857.99px;font-size:16.2px;color:#000000;font-weight:normal;">6724</div>
<div class="t" style="left:372.5px;width:800px;text-align:center;top:857.99px;font-size:16.2px;color:#000000;font-weight:normal;">Forgotten Password</div>
<div class="t" style="left:879px;transform-origin:0 0;top:857.99px;font-size:16.2px;color:#000000;font-weight:normal;">Hold</div>
<div class="t" style="left:304px;width:800px;text-align:right;transform-origin:100% 0;top:857.99px;font-size:16.2px;color:#000000;font-weight:normal;">2<span style="margin:0 1.2px">/</span>28<span style="margin:0 1.2px">/</span>2021</div>
<div class="t" style="left:397px;width:800px;text-align:right;transform-origin:100% 0;top:857.99px;font-size:16.2px;color:#000000;font-weight:normal;">19</div>
<div class="t" style="left:37.5px;transform-origin:0 0;top:881.99px;font-size:16.2px;color:#000000;font-weight:normal;">398-79106</div>
<div class="t" style="left:-495px;width:800px;text-align:right;transform-origin:100% 0;top:881.99px;font-size:16.2px;color:#000000;font-weight:normal;">2<span style="margin:0 1.2px">/</span>10<span style="margin:0 1.2px">/</span>2021</div>
<div class="t" style="left:313px;transform-origin:0 0;top:881.99px;font-size:16.2px;color:#000000;font-weight:normal;">Hardy</div>
<div class="t" style="left:421px;transform-origin:0 0;top:881.99px;font-size:16.2px;color:#000000;font-weight:normal;">Vong</div>
<div class="t" style="left:-135px;width:800px;text-align:right;transform-origin:100% 0;top:881.99px;font-size:16.2px;color:#000000;font-weight:normal;">4549</div>
<div class="t" style="left:372.5px;width:800px;text-align:center;top:881.99px;font-size:16.2px;color:#000000;font-weight:normal;">Printing Issues</div>
<div class="t" style="left:879px;transform-origin:0 0;top:881.99px;font-size:16.2px;color:#000000;font-weight:normal;">Closed</div>
<div class="t" style="left:304px;width:800px;text-align:right;transform-origin:100% 0;top:881.99px;font-size:16.2px;color:#000000;font-weight:normal;">2<span style="margin:0 1.2px">/</span>23<span style="margin:0 1.2px">/</span>2021</div>
<div class="t" style="left:397px;width:800px;text-align:right;transform-origin:100% 0;top:881.99px;font-size:16.2px;color:#000000;font-weight:normal;">13</div>
<div class="t" style="left:37.5px;transform-origin:0 0;top:905.99px;font-size:16.2px;color:#000000;font-weight:normal;">619-44822</div>
<div class="t" style="left:-495px;width:800px;text-align:right;transform-origin:100% 0;top:905.99px;font-size:16.2px;color:#000000;font-weight:normal;">2<span style="margin:0 1.2px">/</span>10<span style="margin:0 1.2px">/</span>2021</div>
<div class="t" style="left:313px;transform-origin:0 0;top:905.99px;font-size:16.2px;color:#000000;font-weight:normal;">Silva</div>
<div class="t" style="left:421px;transform-origin:0 0;top:905.99px;font-size:16.2px;color:#000000;font-weight:normal;">Cox</div>
<div class="t" style="left:-135px;width:800px;text-align:right;transform-origin:100% 0;top:905.99px;font-size:16.2px;color:#000000;font-weight:normal;">8950</div>
<div class="t" style="left:372.5px;width:800px;text-align:center;top:905.99px;font-size:16.2px;color:#000000;font-weight:normal;">Software Update</div>
<div class="t" style="left:879px;transform-origin:0 0;top:905.99px;font-size:16.2px;color:#000000;font-weight:normal;">Closed</div>
<div class="t" style="left:304px;width:800px;text-align:right;transform-origin:100% 0;top:905.99px;font-size:16.2px;color:#000000;font-weight:normal;">2<span style="margin:0 1.2px">/</span>12<span style="margin:0 1.2px">/</span>2021</div>
<div class="t" style="left:397px;width:800px;text-align:right;transform-origin:100% 0;top:905.99px;font-size:16.2px;color:#000000;font-weight:normal;">2</div>
<div class="t" style="left:37.5px;transform-origin:0 0;top:929.99px;font-size:16.2px;color:#000000;font-weight:normal;">752-21845</div>
<div class="t" style="left:-495px;width:800px;text-align:right;transform-origin:100% 0;top:929.99px;font-size:16.2px;color:#000000;font-weight:normal;">2<span style="margin:0 1.2px">/</span>11<span style="margin:0 1.2px">/</span>2021</div>
<div class="t" style="left:313px;transform-origin:0 0;top:929.99px;font-size:16.2px;color:#000000;font-weight:normal;">Hanson</div>
<div class="t" style="left:421px;transform-origin:0 0;top:929.99px;font-size:16.2px;color:#000000;font-weight:normal;">Leggett</div>
<div class="t" style="left:-135px;width:800px;text-align:right;transform-origin:100% 0;top:929.99px;font-size:16.2px;color:#000000;font-weight:normal;">7444</div>
<div class="t" style="left:372.5px;width:800px;text-align:center;top:929.99px;font-size:16.2px;color:#000000;font-weight:normal;">Virus</div>
<div class="t" style="left:879px;transform-origin:0 0;top:929.99px;font-size:16.2px;color:#000000;font-weight:normal;">Open</div>
<div class="t" style="left:304px;width:800px;text-align:right;transform-origin:100% 0;top:929.99px;font-size:16.2px;color:#000000;font-weight:normal;">2<span style="margin:0 1.2px">/</span>27<span style="margin:0 1.2px">/</span>2021</div>
<div class="t" style="left:397px;width:800px;text-align:right;transform-origin:100% 0;top:929.99px;font-size:16.2px;color:#000000;font-weight:normal;">16</div>
<div class="t" style="left:40px;transform-origin:0 0;top:304.11px;font-size:38.5px;color:#000000;font-weight:normal;transform:scaleX(1.0091);">Technical Support Calls</div>
<div class="t" style="left:37.5px;transform-origin:0 0;top:378.19px;font-size:16.2px;color:#000000;font-weight:normal;">Threshold</div>
<div class="t" style="left:-151.0px;width:800px;text-align:center;top:378.19px;font-size:16.2px;color:#000000;font-weight:normal;">30</div>
<div class="t" style="left:313px;transform-origin:0 0;top:378.19px;font-size:16.2px;color:#000000;font-weight:normal;">days</div>
<div class="a" style="left:1280px;top:396px;width:83px;height:27px;box-sizing:border-box;border:2px solid #107C41"></div>
<div class="a" style="left:1357px;top:418px;width:8px;height:7px;background:#FFFFFF"></div>
<div class="a" style="left:1359px;top:419px;width:5px;height:5px;background:#107C41"></div>
<div class="a" style="left:10.5px;top:232.5px;width:125.5px;height:29px;box-sizing:border-box;background:#FFFFFF;border:1px solid #DCDCDC;border-radius:6px"></div>
<div class="t" style="left:17.5px;transform-origin:0 0;top:239.68px;font-size:15.5px;color:#1F1F1F;font-weight:normal;transform:scaleX(0.9230);">K4</div>
<svg class="a" style="left:117px;top:246px;overflow:visible" width="12" height="7" viewBox="0 0 12 7"><path d="M0.6 0.6 L6 6 L11.4 0.6" stroke="#333" stroke-width="1.3" fill="none"/></svg>
<div class="a" style="left:148px;top:241px;width:3px;height:2.5px;background:#333"></div>
<div class="a" style="left:148px;top:246.5px;width:3px;height:2.5px;background:#333"></div>
<div class="a" style="left:148px;top:252px;width:3px;height:2.5px;background:#333"></div>
<div class="a" style="left:163px;top:232.5px;width:90.5px;height:29px;box-sizing:border-box;background:#FFFFFF;border:1px solid #DCDCDC;border-radius:6px"></div>
<svg class="a" style="left:170px;top:239.5px;overflow:visible" width="16" height="16" viewBox="0 0 16 16"><path d="M0.8 0.8 L15.2 15.2 M15.2 0.8 L0.8 15.2" stroke="#B0B0B0" stroke-width="1.3"/></svg>
<svg class="a" style="left:198px;top:240px;overflow:visible" width="20" height="13" viewBox="0 0 20 13"><path d="M0.8 7 L6.5 12.2 L19.2 0.8" stroke="#B0B0B0" stroke-width="1.3" fill="none"/></svg>
<div class="t" style="left:229px;transform-origin:0 0;top:237.42px;font-size:19px;color:#222;font-weight:normal;transform:scaleX(1.2177);font-family:'Liberation Serif';font-style:italic">fx</div>
<div class="a" style="left:260px;top:232.5px;width:1649px;height:29px;box-sizing:border-box;background:#FFFFFF;border:1px solid #DCDCDC;border-radius:6px"></div>
<svg class="a" style="left:1892px;top:243px;overflow:visible" width="12" height="7" viewBox="0 0 12 7"><path d="M0.6 0.6 L6 6 L11.4 0.6" stroke="#333" stroke-width="1.3" fill="none"/></svg>
<div class="a" style="left:0px;top:953px;width:1920px;height:40px;background:#EEEAE7"></div>
<div class="a" style="left:128px;top:953px;width:148px;height:10px;background:#FFFFFF"></div>
<div class="a" style="left:0px;top:953px;width:141px;height:40px;background:#EEEAE7;border-top-right-radius:8px"></div>
<div class="a" style="left:262px;top:953px;width:1658px;height:40px;background:#EEEAE7;border-top-left-radius:8px"></div>
<div class="a" style="left:1894px;top:270px;width:26px;height:686px;background:linear-gradient(#E9E8E7,#EEEAE7 30%,#EEEAE7)"></div>
<div class="a" style="left:1894px;top:270px;width:1px;height:683px;background:#E0E0E0"></div>
<div class="a" style="left:0px;top:952px;width:1895px;height:1px;background:#E2E2E2"></div>
<div class="a" style="left:1897px;top:270px;width:21px;height:685px;background:#F3F3F3;border-radius:10px"></div>
<svg class="a" style="left:1902px;top:276px;overflow:visible" width="11" height="9" viewBox="0 0 11 9"><path d="M5.5 0.5 L11 8 Q11 9 10 9 L1 9 Q0 9 0 8 Z" fill="#6E6E6E"/></svg>
<div class="a" style="left:1902px;top:291px;width:11px;height:148px;background:#6E6E6E;border-radius:6px"></div>
<svg class="a" style="left:1902px;top:940px;overflow:visible" width="11" height="9" viewBox="0 0 11 9"><path d="M5.5 8.5 L11 1 Q11 0 10 0 L1 0 Q0 0 0 1 Z" fill="#6E6E6E"/></svg>
<svg class="a" style="left:32px;top:965px;overflow:visible" width="8" height="13" viewBox="0 0 8 13"><path d="M7 0.7 L1.2 6.5 L7 12.3" stroke="#A8A8A8" stroke-width="1.3" fill="none"/></svg>
<svg class="a" style="left:72px;top:965px;overflow:visible" width="8" height="13" viewBox="0 0 8 13"><path d="M1 0.7 L6.8 6.5 L1 12.3" stroke="#A8A8A8" stroke-width="1.3" fill="none"/></svg>
<div class="a" style="left:140.5px;top:953px;width:121.5px;height:35px;background:#FFFFFF;border-radius:0 0 7px 7px;box-shadow:0 1px 1px rgba(0,0,0,0.06)"></div>
<div class="t" style="left:151px;transform-origin:0 0;top:961.21px;font-size:17px;color:#1F1F1F;font-weight:normal;transform:scaleX(1.0377);">SupportCalls</div>
<div class="a" style="left:151px;top:983px;width:101px;height:2.5px;background:#107C41;border-radius:1px"></div>
<div class="a" style="left:267px;top:962px;width:1px;height:23px;background:#C9C9C9"></div>
<svg class="a" style="left:320px;top:965px;overflow:visible" width="13" height="13" viewBox="0 0 13 13"><path d="M6.5 0 V13 M0 6.5 H13" stroke="#333" stroke-width="1.5"/></svg>
<div class="a" style="left:1154.5px;top:966px;width:2.5px;height:2.5px;background:#444;border-radius:1px"></div>
<div class="a" style="left:1154.5px;top:971px;width:2.5px;height:2.5px;background:#444;border-radius:1px"></div>
<div class="a" style="left:1154.5px;top:976px;width:2.5px;height:2.5px;background:#444;border-radius:1px"></div>
<div class="a" style="left:1176px;top:962px;width:718px;height:20.5px;background:#F3F3F3;border-radius:10px"></div>
<svg class="a" style="left:1181.5px;top:967px;overflow:visible" width="9" height="11" viewBox="0 0 9 11"><path d="M0.5 5.5 L8 0 Q9 0 9 1 L9 10 Q9 11 8 11 Z" fill="#6E6E6E"/></svg>
<div class="a" style="left:1197.5px;top:967px;width:664.5px;height:11px;background:#6E6E6E;border-radius:6px"></div>
<svg class="a" style="left:1879px;top:967px;overflow:visible" width="9" height="11" viewBox="0 0 9 11"><path d="M8.5 5.5 L1 0 Q0 0 0 1 L0 10 Q0 11 1 11 Z" fill="#6E6E6E"/></svg>
<div class="a" style="left:0px;top:993px;width:1920px;height:27px;background:#F3F3F3"></div>
<div class="t" style="left:14px;transform-origin:0 0;top:1000.03px;font-size:14.5px;color:#333;font-weight:normal;transform:scaleX(0.8589);">Ready</div>
<svg class="a" style="left:74px;top:997px;overflow:visible" width="20" height="20" viewBox="0 0 20 20"><circle cx="8.6" cy="4" r="2.4" fill="none" stroke="#222" stroke-width="1.3"/>
<path d="M7 6.6 Q4.5 6 3 5.6 Q1 5.3 1.3 7 Q1.6 8.3 4 8.8 Q5.8 9.3 5.6 11 L4.3 16.5 Q4 18.5 5.6 18.7 Q6.8 18.8 7.5 17 L8.8 13.5 L9.6 15.5" stroke="#222" stroke-width="1.3" fill="none" stroke-linejoin="round"/>
<path d="M10.2 6.6 Q12.5 6 14 5.6 Q16 5.3 15.8 7 Q15.6 8.3 13 9 L11.2 9.8" stroke="#222" stroke-width="1.3" fill="none" stroke-linejoin="round"/>
<path d="M10.2 9.6 L18.8 18.6 M18.6 9.6 L10.2 18.6" stroke="#222" stroke-width="1.1"/></svg>
<div class="t" style="left:97px;transform-origin:0 0;top:1000.03px;font-size:14.5px;color:#222;font-weight:bold;transform:scaleX(0.8773);">Accessibility: Investigate</div>
<div class="a" style="left:1548px;top:993px;width:50px;height:27px;background:#E0E0E0"></div>
<svg class="a" style="left:1564px;top:998px;overflow:visible" width="18" height="18" viewBox="0 0 18 18"><rect x="0.8" y="0.8" width="16.4" height="16.4" fill="none" stroke="#444" stroke-width="1.6"/><path d="M6.3 0.8 V17.2 M11.7 0.8 V17.2 M0.8 6.3 H17.2 M0.8 11.7 H17.2" stroke="#444" stroke-width="1.5"/></svg>
<svg class="a" style="left:1614px;top:998px;overflow:visible" width="18" height="18" viewBox="0 0 18 18"><rect x="0.8" y="0.8" width="16.4" height="16.4" fill="none" stroke="#444" stroke-width="1.5"/><rect x="4" y="3.5" width="10" height="11" fill="none" stroke="#444" stroke-width="1.2"/><path d="M6 6.5 H12 M6 9 H12 M6 11.5 H12" stroke="#444" stroke-width="1"/></svg>
<svg class="a" style="left:1664px;top:998px;overflow:visible" width="18" height="18" viewBox="0 0 18 18"><rect x="0.8" y="0.8" width="16.4" height="16.4" fill="none" stroke="#444" stroke-width="1.5"/><path d="M4.5 0.8 V9 H12.5 V0.8 M8.5 0.8 V9" stroke="#444" stroke-width="1.3" fill="none"/></svg>
<div class="a" style="left:1705px;top:1006px;width:9px;height:1.3px;background:#444"></div>
<div class="a" style="left:1721px;top:1007px;width:125px;height:1px;background:#8A8A8A"></div>
<div class="a" style="left:1781px;top:1000px;width:6px;height:14px;background:#5E5E5E;border-radius:1px"></div>
<svg class="a" style="left:1852px;top:1001px;overflow:visible" width="11" height="11" viewBox="0 0 11 11"><path d="M5.5 0 V11 M0 5.5 H11" stroke="#444" stroke-width="1.2"/></svg>
<div class="t" style="left:1879px;transform-origin:0 0;top:1000.03px;font-size:14.5px;color:#333;font-weight:normal;transform:scaleX(0.8089);">100%</div>
<div class="a" style="left:0px;top:1020px;width:1920px;height:60px;background:linear-gradient(90deg,#3A221A 0%,#36231C 25%,#3A2019 45%,#3F1E18 60%,#37241D 80%,#2D2624 100%)"></div>
<div class="a" style="left:0px;top:1020px;width:1920px;height:1px;background:#4A3A34"></div>
<svg class="a" style="left:24px;top:1036px;overflow:visible" width="34" height="30" viewBox="0 0 34 30"><circle cx="20" cy="9" r="5" fill="#F59B23"/>
<path d="M6 27 Q1 27 1 22 Q1 17.5 6 17 Q7 11 13.5 11 Q19 11 21 15.5 Q28 15 29.5 20.5 Q31 27 25 27 Z" fill="#DCEBFA"/>
<path d="M6 27 Q1 27 1 22 L29.5 22 Q31 27 25 27 Z" fill="#A9C8EE"/></svg>
<div class="a" style="left:39px;top:1026px;width:20px;height:20px;background:#C42B1C;border-radius:50%"></div>
<div class="t" style="left:-351.0px;width:800px;text-align:center;top:1029.87px;font-size:13.5px;color:#FFFFFF;font-weight:bold;">1</div>
<div class="t" style="left:64px;transform-origin:0 0;top:1032.60px;font-size:15px;color:#FFFFFF;font-weight:normal;transform:scaleX(0.9420);">63°F</div>
<div class="t" style="left:64px;transform-origin:0 0;top:1052.60px;font-size:15px;color:#E8E0DC;font-weight:normal;transform:scaleX(1.0345);">Mostly cloudy</div>
<svg class="a" style="left:445.5px;top:1035.5px;overflow:visible" width="30" height="30" viewBox="0 0 30 30"><defs><linearGradient id="wg" x1="0" y1="0" x2="1" y2="1"><stop offset="0" stop-color="#7FE0FF"/><stop offset="1" stop-color="#1A9BE8"/></linearGradient></defs>
<rect x="0" y="0" width="14" height="14" rx="1" fill="url(#wg)"/><rect x="16" y="0" width="14" height="14" rx="1" fill="url(#wg)"/>
<rect x="0" y="16" width="14" height="14" rx="1" fill="url(#wg)"/><rect x="16" y="16" width="14" height="14" rx="1" fill="url(#wg)"/></svg>
<div class="a" style="left:491.5px;top:1031px;width:273.5px;height:38px;background:#EFEFEF;border-radius:19px"></div>
<svg class="a" style="left:506px;top:1042px;overflow:visible" width="19" height="18" viewBox="0 0 19 18"><circle cx="7.5" cy="7.5" r="6.3" stroke="#1F1F1F" stroke-width="2" fill="none"/><path d="M12 12 L17.5 17" stroke="#1F1F1F" stroke-width="2.2" stroke-linecap="round"/></svg>
<div class="t" style="left:537.5px;transform-origin:0 0;top:1043.49px;font-size:17.5px;color:#444444;font-weight:normal;transform:scaleX(0.9107);">Search</div>
<svg class="a" style="left:700px;top:1036px;overflow:visible" width="58" height="33" viewBox="0 0 58 33"><ellipse cx="30" cy="26.5" rx="28" ry="5.5" fill="#E6C99B"/>
<path d="M5 16 L17 11.5 L18.5 26 L7 29 Z" fill="#3FA34D"/>
<path d="M17 11.5 L29 8.5 L29.5 23 L18.5 26 Z" fill="#3FA34D"/>
<path d="M6 14.5 L17 10.5 L18 24.5 L7.5 27 Z" fill="#F7F7F7" stroke="#C9C9C9" stroke-width="0.6"/>
<path d="M17 10.5 L28 7.5 L28.5 21.5 L18 24.5 Z" fill="#FFFFFF" stroke="#C9C9C9" stroke-width="0.6"/>
<path d="M9 17 L15 15 M9.5 20 L15.5 18 M20 14 L26 12.5 M20.5 17 L26.5 15.5" stroke="#B5B5B5" stroke-width="0.8"/>
<path d="M21 14 L29 5" stroke="#F3A712" stroke-width="2.8"/><path d="M28 6 L30.5 3.3" stroke="#E84A4A" stroke-width="2.8"/>
<path d="M43 4 Q43 1 46 1 Q49 1 49 4" stroke="#2A6FD8" stroke-width="1.3" fill="none"/>
<path d="M39 25 Q37 25 37 22 L37 11 Q37 3.5 46 3.5 Q55 3.5 55 11 L55 22 Q55 25 53 25 Z" fill="#2A7BE8"/>
<path d="M40 21 Q46 13 52 21 L52 24.5 L40 24.5 Z" fill="#5DB0F7"/><rect x="40" y="22.5" width="12" height="2.5" fill="#B98BF0"/></svg>
<svg class="a" style="left:781px;top:1036px;overflow:visible" width="30" height="29" viewBox="0 0 30 29"><rect x="0" y="10" width="20" height="19" rx="2" fill="#6A6A6A"/><rect x="9" y="0" width="21" height="20" rx="2" fill="#F2F2F2"/>
<rect x="9" y="10" width="11" height="10" fill="#B8B8B8"/></svg>
<svg class="a" style="left:836px;top:1036px;overflow:visible" width="29" height="28" viewBox="0 0 29 28"><defs><linearGradient id="mg" x1="0" y1="0" x2="1" y2="1"><stop offset="0" stop-color="#8B7BE0"/><stop offset="1" stop-color="#5B4FC0"/></linearGradient></defs>
<path d="M14.5 0 A14 13.5 0 1 1 6 24.5 L0.5 27.5 L3 21 A14 13.5 0 0 1 14.5 0 Z" fill="url(#mg)"/>
<rect x="6.5" y="9" width="11" height="10" rx="2" fill="#fff"/><path d="M18.5 12.5 L23 9.5 V18.5 L18.5 15.5 Z" fill="#fff"/></svg>
<svg class="a" style="left:892px;top:1035.5px;overflow:visible" width="29" height="29" viewBox="0 0 29 29"><circle cx="14.5" cy="14.5" r="14.5" fill="#1ED760"/>
<path d="M6 10 Q15 7 23.5 11.5" stroke="#111" stroke-width="2.5" fill="none" stroke-linecap="round"/>
<path d="M7 15 Q14.5 12.8 21.5 16" stroke="#111" stroke-width="2.1" fill="none" stroke-linecap="round"/>
<path d="M8 19.5 Q14 17.8 19.5 20.5" stroke="#111" stroke-width="1.8" fill="none" stroke-linecap="round"/></svg>
<svg class="a" style="left:946px;top:1035px;overflow:visible" width="30" height="30" viewBox="0 0 30 30"><rect x="0" y="0" width="30" height="30" fill="#52A535"/>
<rect x="6" y="6" width="6" height="6" fill="#111"/><rect x="18" y="6" width="6" height="6" fill="#111"/>
<rect x="12" y="12" width="6" height="4" fill="#111"/><rect x="9" y="15" width="12" height="7" fill="#111"/>
<rect x="9" y="22" width="3" height="3" fill="#111"/><rect x="18" y="22" width="3" height="3" fill="#111"/></svg>
<svg class="a" style="left:1001px;top:1037px;overflow:visible" width="30" height="27" viewBox="0 0 30 27"><path d="M0 2 Q0 0 2 0 L10 0 L13 3 L28 3 Q30 3 30 5 L30 8 L0 8 Z" fill="#E8A317"/>
<rect x="0" y="5" width="30" height="22" rx="1.5" fill="#FFD45A"/>
<rect x="6" y="19" width="18" height="8" rx="1.5" fill="#1C7FD6"/><rect x="8" y="21" width="14" height="1.5" fill="#7CC0F5"/></svg>
<svg class="a" style="left:1056px;top:1035px;overflow:visible" width="30" height="30" viewBox="0 0 30 30"><defs><linearGradient id="eg" x1="0" y1="0" x2="1" y2="1"><stop offset="0" stop-color="#33C4F0"/><stop offset="0.5" stop-color="#1E88D8"/><stop offset="1" stop-color="#56D37A"/></linearGradient></defs>
<circle cx="15" cy="15" r="15" fill="url(#eg)"/>
<path d="M4 21 Q2 10 13 10 Q22 10 22 17 L10 17 Q10 25 20 25 Q25 25 28 22 Q24 30 14 30 Q5 29 4 21 Z" fill="#0C59A4"/>
<ellipse cx="16" cy="17" rx="6" ry="3" fill="#3D2319"/></svg>
<svg class="a" style="left:1111px;top:1036px;overflow:visible" width="29" height="29" viewBox="0 0 29 29"><path d="M8 6 V2 Q8 0.5 9.5 0.5 H19.5 Q21 0.5 21 2 V6" stroke="#3AA0E8" stroke-width="2" fill="none"/>
<rect x="0" y="5" width="29" height="24" rx="3" fill="#F6F6F6"/>
<rect x="9" y="11" width="5" height="5" fill="#F25022"/><rect x="15" y="11" width="5" height="5" fill="#7FBA00"/>
<rect x="9" y="17" width="5" height="5" fill="#00A4EF"/><rect x="15" y="17" width="5" height="5" fill="#FFB900"/></svg>
<svg class="a" style="left:1166px;top:1035px;overflow:visible" width="30" height="30" viewBox="0 0 30 30"><rect x="0" y="0" width="30" height="30" rx="2" fill="#0E96D8"/>
<text x="2.5" y="19" font-size="8" fill="#fff" font-family="Liberation Sans">my</text>
<text x="13" y="20" font-size="11" font-weight="bold" font-style="italic" fill="#fff" font-family="Liberation Sans">hp</text></svg>
<svg class="a" style="left:1221px;top:1035px;overflow:visible" width="37" height="30" viewBox="0 0 37 30"><circle cx="15" cy="16" r="14" fill="#1E8FD8" stroke="#F0F0F0" stroke-width="1.6"/>
<text x="8.5" y="24" font-size="20" font-weight="bold" fill="#fff" font-family="Liberation Sans">?</text></svg>
<div class="a" style="left:1238px;top:1029px;width:20px;height:20px;background:#F9C217;border-radius:50%"></div>
<svg class="a" style="left:1276px;top:1035px;overflow:visible" width="30" height="30" viewBox="0 0 30 30"><rect x="0" y="0" width="30" height="30" rx="2" fill="#107C10"/>
<circle cx="15" cy="15" r="9.5" fill="#F5F5F5"/>
<path d="M8 9 Q15 13 22 22 M22 9 Q15 13 8 22" stroke="#107C10" stroke-width="2.2" fill="none"/></svg>
<div class="a" style="left:1293px;top:1029px;width:20px;height:20px;background:#5CC7FA;border-radius:50%"></div>
<div class="t" style="left:903.0px;width:800px;text-align:center;top:1032.65px;font-size:14px;color:#111;font-weight:normal;">3</div>
<svg class="a" style="left:1332px;top:1035px;overflow:visible" width="30" height="30" viewBox="0 0 30 30"><circle cx="15" cy="15" r="15" fill="#DB4437"/>
<path d="M15 15 L2 22.5 A15 15 0 0 0 15 30 Z" fill="#0F9D58"/><path d="M2 22.5 A15 15 0 0 1 2.1 7.5 L15 15 Z" fill="#0F9D58"/>
<path d="M15 15 L28 7.5 A15 15 0 0 1 15 30 Z" fill="#F4B400"/>
<circle cx="15" cy="15" r="6.8" fill="#fff"/><circle cx="15" cy="15" r="5.2" fill="#4285F4"/></svg>
<div class="a" style="left:1343px;top:1071px;width:8px;height:3.5px;background:#A89C98;border-radius:2px"></div>
<div class="a" style="left:1377px;top:1025px;width:50px;height:50px;background:rgba(255,255,255,0.08);border-radius:5px"></div>
<svg class="a" style="left:1387px;top:1036px;overflow:visible" width="29" height="28" viewBox="0 0 29 28"><rect x="6" y="0" width="23" height="28" rx="2" fill="#185C37"/>
<path d="M8 0 H27 Q29 0 29 2 V7 H6 V2 Q6 0 8 0 Z" fill="#33C481"/>
<rect x="6" y="7" width="23" height="7" fill="#21A366"/><rect x="6" y="14" width="23" height="7" fill="#107C41"/>
<rect x="0" y="6" width="16" height="16" rx="2" fill="#107C41"/>
<path d="M3.5 9 L6.5 9 L8 12 L9.5 9 L12.5 9 L9.7 14 L12.5 19 L9.5 19 L8 16 L6.5 19 L3.5 19 L6.3 14 Z" fill="#fff"/></svg>
<div class="a" style="left:1392px;top:1071px;width:20px;height:4px;background:#4CC2FF;border-radius:2px"></div>
<svg class="a" style="left:1442px;top:1036px;overflow:visible" width="29" height="28" viewBox="0 0 29 28"><rect x="6" y="0" width="23" height="28" rx="2" fill="#103F91"/>
<path d="M8 0 H27 Q29 0 29 2 V7 H6 V2 Q6 0 8 0 Z" fill="#41A5EE"/>
<rect x="6" y="7" width="23" height="7" fill="#2B7CD3"/><rect x="6" y="14" width="23" height="7" fill="#185ABD"/>
<rect x="0" y="6" width="16" height="16" rx="2" fill="#185ABD"/>
<text x="2.2" y="18.5" font-size="12" font-weight="bold" fill="#fff" font-family="Liberation Sans">W</text></svg>
<div class="a" style="left:1453px;top:1071px;width:8px;height:3.5px;background:#A89C98;border-radius:2px"></div>
<svg class="a" style="left:1569px;top:1046px;overflow:visible" width="15" height="9" viewBox="0 0 15 9"><path d="M0.8 8 L7.5 1.2 L14.2 8" stroke="#fff" stroke-width="1.5" fill="none"/></svg>
<svg class="a" style="left:1606px;top:1043px;overflow:visible" width="21" height="14" viewBox="0 0 21 14"><path d="M4 13.5 Q0 13.5 0 10 Q0 6.5 4 6.3 Q5.5 0.5 11 0.5 Q15.5 0.5 17 4.5 Q21 5 21 9.5 Q21 13.5 17 13.5 Z" fill="#D9D3D0"/><path d="M4 13.5 Q0 13.5 0 10 L21 9.5 Q21 13.5 17 13.5 Z" fill="#F5F5F5"/></svg>
<svg class="a" style="left:1646px;top:1042px;overflow:visible" width="21" height="16" viewBox="0 0 21 16"><path d="M1 5.5 Q10.5 -2.5 20 5.5" stroke="#fff" stroke-width="1.6" fill="none"/>
<path d="M4 8.8 Q10.5 3 17 8.8" stroke="#fff" stroke-width="1.6" fill="none"/>
<path d="M7 12 Q10.5 9 14 12" stroke="#fff" stroke-width="1.6" fill="none"/><circle cx="10.5" cy="14.3" r="1.5" fill="#fff"/></svg>
<svg class="a" style="left:1676px;top:1043px;overflow:visible" width="25" height="15" viewBox="0 0 25 15"><path d="M1 4.5 H5 L10 0.8 V14.2 L5 10.5 H1 Z" stroke="#fff" stroke-width="1.4" fill="none" stroke-linejoin="round"/>
<path d="M15 4 L22 11 M22 4 L15 11" stroke="#fff" stroke-width="1.4"/></svg>
<svg class="a" style="left:1706px;top:1043px;overflow:visible" width="21" height="14" viewBox="0 0 21 14"><rect x="0.7" y="0.7" width="17" height="12.6" rx="2.5" stroke="#fff" stroke-width="1.4" fill="none"/><rect x="3" y="3" width="6.5" height="8" rx="1" fill="#fff"/><rect x="18.5" y="4.5" width="2" height="5" rx="1" fill="#fff"/></svg>
<div class="t" style="left:1016px;width:800px;text-align:right;transform-origin:100% 0;top:1032.80px;font-size:15px;color:#FFFFFF;font-weight:normal;transform:scaleX(0.9657);">12:47 PM</div>
<div class="t" style="left:1016px;width:800px;text-align:right;transform-origin:100% 0;top:1052.80px;font-size:15px;color:#FFFFFF;font-weight:normal;transform:scaleX(1.0340);">4/10/2024</div>
<svg class="a" style="left:1827px;top:1041px;overflow:visible" width="17" height="20" viewBox="0 0 17 20"><path d="M8.5 0.5 Q15 0.5 15 8 L15 13 L17 16 L0 16 L2 13 L2 8 Q2 0.5 8.5 0.5 Z" fill="#8BE0F7"/><path d="M5.5 17 Q8.5 21 11.5 17 Z" fill="#8BE0F7"/></svg>
<svg class="a" style="left:1866px;top:1036px;overflow:visible" width="30" height="30" viewBox="0 0 30 30"><defs><linearGradient id="cg1" x1="0" y1="0" x2="0" y2="1"><stop offset="0" stop-color="#1FA2F2"/><stop offset="0.6" stop-color="#58C870"/><stop offset="1" stop-color="#F2C21A"/></linearGradient>
<linearGradient id="cg2" x1="0" y1="0" x2="1" y2="1"><stop offset="0" stop-color="#2D7BF0"/><stop offset="0.5" stop-color="#C46BE8"/><stop offset="1" stop-color="#F06CA0"/></linearGradient></defs>
<path d="M8 1 Q10 0 13 0 L19 0 Q22 0 21 4 L15 24 Q14 27 10 27 L4 27 Q0 27 1 23 L6 4 Q7 1.5 8 1 Z" fill="url(#cg1)"/>
<path d="M14 5 Q15 2 18 2 L24 2 Q28 2 27 6 L22 22 Q21 25 18 25 L12 25 Q9 25 10 22 Z" fill="url(#cg2)" opacity="0.92"/>
<rect x="10" y="18" width="20" height="11" rx="2.5" fill="#F9C217"/>
<text x="12.3" y="27" font-size="7.6" font-weight="bold" fill="#111" font-family="Liberation Sans">PRE</text></svg>
</body></html>
